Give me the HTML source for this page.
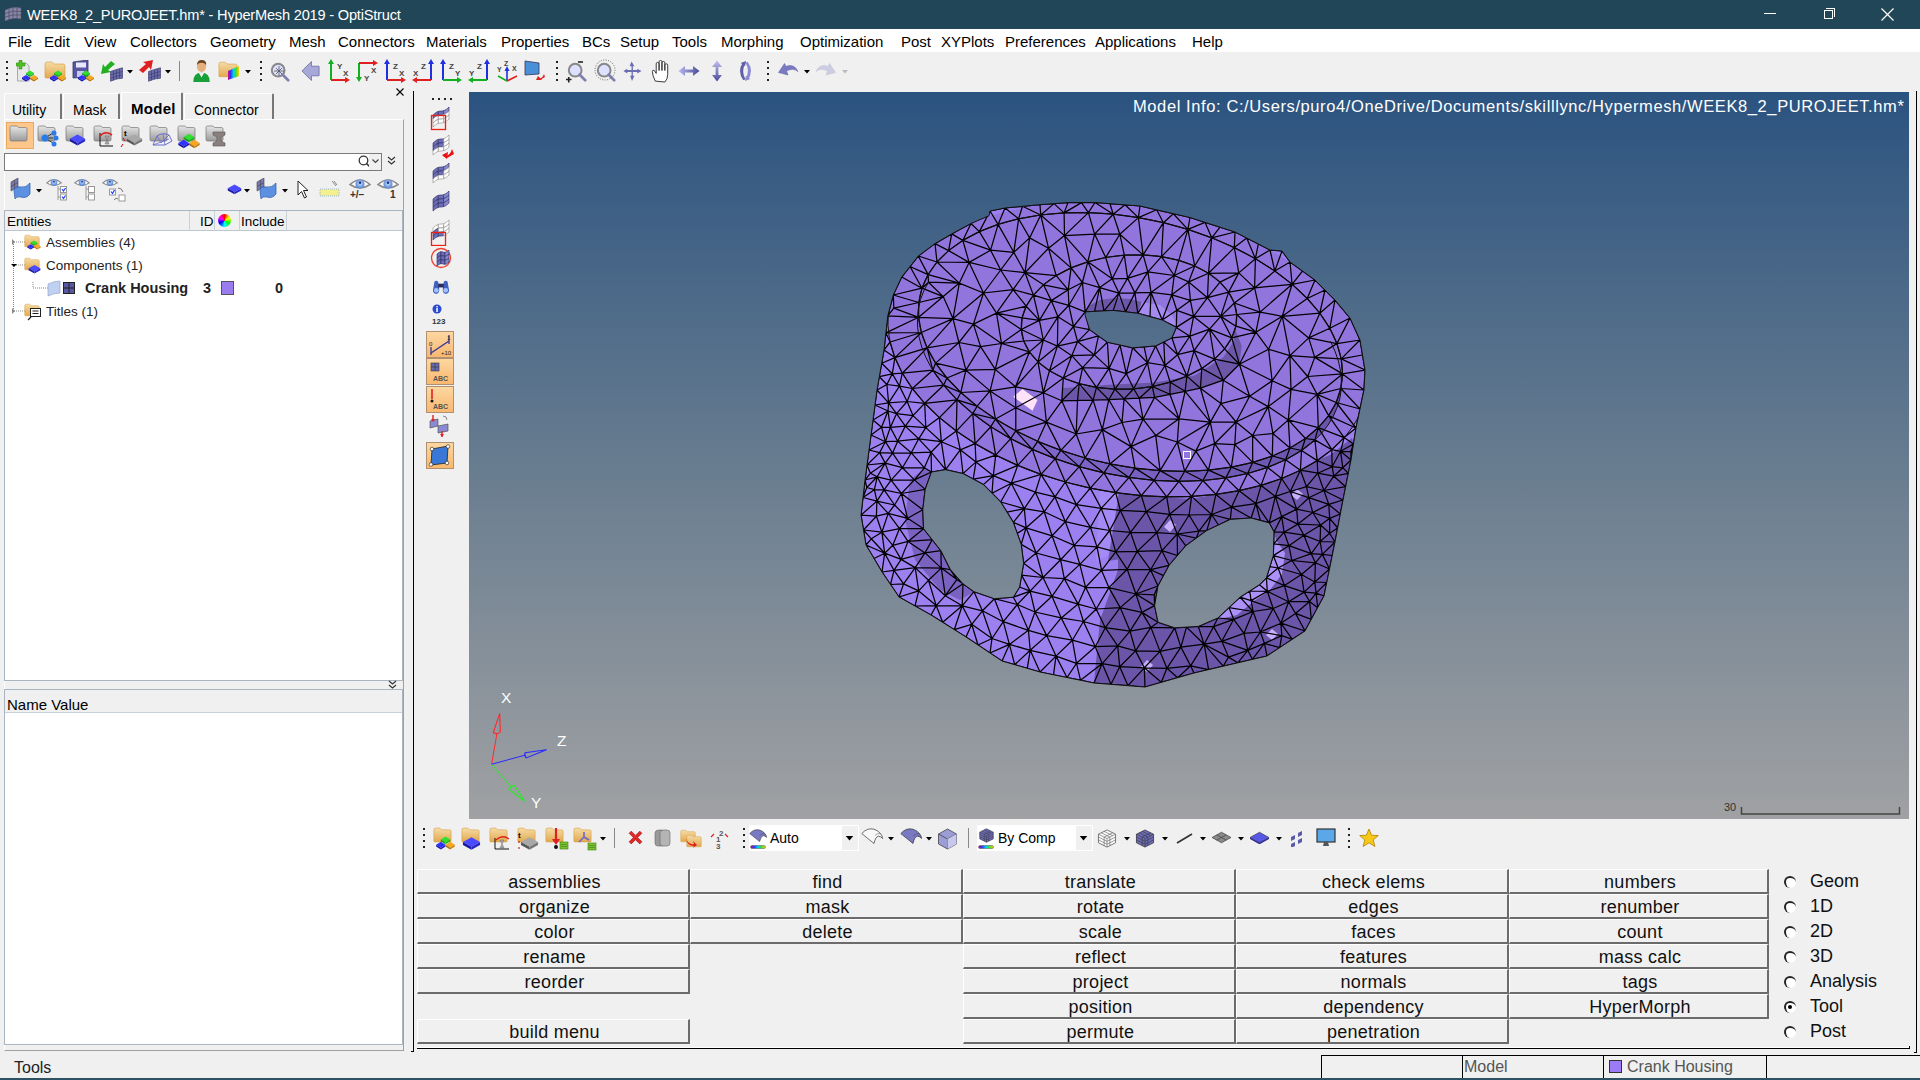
<!DOCTYPE html>
<html><head><meta charset="utf-8"><title>HyperMesh</title>
<style>*{box-sizing:border-box;margin:0;padding:0}
html,body{width:1920px;height:1080px;overflow:hidden;background:#f0f0f0;font-family:"Liberation Sans",sans-serif;color:#000}
.a{position:absolute}
.t{position:absolute;white-space:nowrap;line-height:1}
#title{left:0;top:0;width:1920px;height:29px;background:#214658}
#menu{left:0;top:29px;width:1920px;height:23px;background:#fff}
#menu .t{font-size:15px;top:5px;color:#000}
.btn{position:absolute;height:25px;background:#f0f0f0;border-top:1px solid #fff;border-left:1px solid #fff;border-bottom:2px solid #6b6b6b;border-right:2px solid #6b6b6b;font-size:18px;text-align:center;line-height:24px;padding-left:3px;letter-spacing:.25px;color:#111}
.rad{position:absolute;width:12px;height:12px;border-radius:50%;background:#fff;border-left:2px solid #222;border-top:2px solid #222;}
.rt{position:absolute;font-size:18px;line-height:1;white-space:nowrap;color:#111}
</style></head>
<body>
<!-- title bar -->
<div id="title" class="a">
  <svg class="a" style="left:4px;top:5px" width="18" height="18" viewBox="0 0 18 18"><path d="M1 5 Q9 1 17 3 L17 14 Q9 12 1 16 Z" fill="#8585b0" stroke="#555" stroke-width=".5"/><path d="M5 4v11M9 3v10M13 3v10M1 8.5Q9 5 17 6.5M1 12Q9 9 17 10" stroke="#444" stroke-width=".6" fill="none"/></svg>
  <div class="t" style="left:27px;top:8px;font-size:14.6px;letter-spacing:-0.2px;color:#fff">WEEK8_2_PUROJEET.hm* - HyperMesh 2019 - OptiStruct</div>
  <div class="a" style="left:1764px;top:13px;width:12px;height:1px;background:#fff"></div>
  <div class="a" style="left:1824px;top:10px;width:9px;height:9px;border:1px solid #fff"></div>
  <div class="a" style="left:1826px;top:8px;width:9px;height:9px;border-top:1px solid #fff;border-right:1px solid #fff"></div>
  <svg class="a" style="left:1881px;top:8px" width="13" height="13"><path d="M0.5 .5L12.5 12.5M12.5 .5L.5 12.5" stroke="#fff" stroke-width="1.2"/></svg>
</div>
<!-- menu -->
<div id="menu" class="a">
  <div class="t" style="left:8px">File</div>
  <div class="t" style="left:44px">Edit</div>
  <div class="t" style="left:84px">View</div>
  <div class="t" style="left:130px">Collectors</div>
  <div class="t" style="left:210px">Geometry</div>
  <div class="t" style="left:289px">Mesh</div>
  <div class="t" style="left:338px">Connectors</div>
  <div class="t" style="left:426px">Materials</div>
  <div class="t" style="left:501px">Properties</div>
  <div class="t" style="left:582px">BCs</div>
  <div class="t" style="left:620px">Setup</div>
  <div class="t" style="left:672px">Tools</div>
  <div class="t" style="left:721px">Morphing</div>
  <div class="t" style="left:800px">Optimization</div>
  <div class="t" style="left:901px">Post</div>
  <div class="t" style="left:941px">XYPlots</div>
  <div class="t" style="left:1005px">Preferences</div>
  <div class="t" style="left:1095px">Applications</div>
  <div class="t" style="left:1192px">Help</div>
</div>

<!-- viewport -->
<div class="a" style="left:469px;top:92px;width:1440px;height:727px;background:linear-gradient(#2b5380 0%,#667b8f 50%,#a0a1a3 100%)"></div>
<div class="t" style="left:1133px;top:98px;font-size:16.5px;letter-spacing:0.6px;color:#fff">Model Info: C:/Users/puro4/OneDrive/Documents/skilllync/Hypermesh/WEEK8_2_PUROJEET.hm*</div>

<!-- black separators -->
<div class="a" style="left:413px;top:91px;width:1px;height:961px;background:#000"></div>
<div class="a" style="left:1916px;top:91px;width:1px;height:962px;background:#000"></div>

<!-- left panel -->
<div class="a" style="left:4px;top:119px;width:400px;height:932px;border:1px solid #a0a0a0;border-top-color:#fff;border-left-color:#fff"></div>
<div class="a" style="left:4px;top:153px;width:378px;height:18px;background:#fff;border:1px solid #7a7a7a"></div>
<div class="a" style="left:4px;top:210px;width:399px;height:471px;background:#fff;border:1px solid #a9b6c2"></div>
<div class="a" style="left:5px;top:211px;width:397px;height:20px;background:#f0f0f0;border-bottom:1px solid #bcc7d0"></div>
<div class="t" style="left:7px;top:215px;font-size:13.5px;color:#000">Entities</div>
<div class="t" style="left:200px;top:215px;font-size:13.5px">ID</div>
<div class="t" style="left:241px;top:215px;font-size:13.5px">Include</div>
<div class="t" style="left:46px;top:236px;font-size:13.5px;color:#222">Assemblies (4)</div>
<div class="t" style="left:46px;top:259px;font-size:13.5px;color:#222">Components (1)</div>
<div class="t" style="left:85px;top:281px;font-size:14.5px;font-weight:bold;color:#222">Crank Housing</div>
<div class="t" style="left:203px;top:281px;font-size:14.5px;font-weight:bold;color:#222">3</div>
<div class="a" style="left:221px;top:281px;width:13px;height:14px;background:#9b7cf0;border:1px solid #555"></div>
<div class="t" style="left:275px;top:281px;font-size:14.5px;font-weight:bold;color:#222">0</div>
<div class="t" style="left:46px;top:305px;font-size:13.5px;color:#222">Titles (1)</div>

<div class="a" style="left:4px;top:689px;width:399px;height:356px;background:#fff;border:1px solid #a9b6c2"></div>
<div class="a" style="left:5px;top:690px;width:397px;height:23px;background:#f0f0f0;border-bottom:1px solid #c8d0d8"></div>
<div class="t" style="left:7px;top:697px;font-size:15px">Name Value</div>

<div class="t" style="left:14px;top:1060px;font-size:16px;color:#222">Tools</div>

<!-- button grid -->
<div class="btn" style="left:417px;top:869px;width:273px">assemblies</div>
<div class="btn" style="left:417px;top:894px;width:273px">organize</div>
<div class="btn" style="left:417px;top:919px;width:273px">color</div>
<div class="btn" style="left:417px;top:944px;width:273px">rename</div>
<div class="btn" style="left:417px;top:969px;width:273px">reorder</div>
<div class="btn" style="left:417px;top:1019px;width:273px">build menu</div>
<div class="btn" style="left:690px;top:869px;width:273px">find</div>
<div class="btn" style="left:690px;top:894px;width:273px">mask</div>
<div class="btn" style="left:690px;top:919px;width:273px">delete</div>
<div class="btn" style="left:963px;top:869px;width:273px">translate</div>
<div class="btn" style="left:963px;top:894px;width:273px">rotate</div>
<div class="btn" style="left:963px;top:919px;width:273px">scale</div>
<div class="btn" style="left:963px;top:944px;width:273px">reflect</div>
<div class="btn" style="left:963px;top:969px;width:273px">project</div>
<div class="btn" style="left:963px;top:994px;width:273px">position</div>
<div class="btn" style="left:963px;top:1019px;width:273px">permute</div>
<div class="btn" style="left:1236px;top:869px;width:273px">check elems</div>
<div class="btn" style="left:1236px;top:894px;width:273px">edges</div>
<div class="btn" style="left:1236px;top:919px;width:273px">faces</div>
<div class="btn" style="left:1236px;top:944px;width:273px">features</div>
<div class="btn" style="left:1236px;top:969px;width:273px">normals</div>
<div class="btn" style="left:1236px;top:994px;width:273px">dependency</div>
<div class="btn" style="left:1236px;top:1019px;width:273px">penetration</div>
<div class="btn" style="left:1509px;top:869px;width:260px">numbers</div>
<div class="btn" style="left:1509px;top:894px;width:260px">renumber</div>
<div class="btn" style="left:1509px;top:919px;width:260px">count</div>
<div class="btn" style="left:1509px;top:944px;width:260px">mass calc</div>
<div class="btn" style="left:1509px;top:969px;width:260px">tags</div>
<div class="btn" style="left:1509px;top:994px;width:260px">HyperMorph</div>
<div class="rad" style="left:1784px;top:876px"></div>
<div class="rt" style="left:1810px;top:872px">Geom</div>
<div class="rad" style="left:1784px;top:901px"></div>
<div class="rt" style="left:1810px;top:897px">1D</div>
<div class="rad" style="left:1784px;top:926px"></div>
<div class="rt" style="left:1810px;top:922px">2D</div>
<div class="rad" style="left:1784px;top:951px"></div>
<div class="rt" style="left:1810px;top:947px">3D</div>
<div class="rad" style="left:1784px;top:976px"></div>
<div class="rt" style="left:1810px;top:972px">Analysis</div>
<div class="rad" style="left:1784px;top:1001px"></div>
<div class="a" style="left:1788px;top:1005px;width:4px;height:4px;border-radius:50%;background:#000"></div>
<div class="rt" style="left:1810px;top:997px">Tool</div>
<div class="rad" style="left:1784px;top:1026px"></div>
<div class="rt" style="left:1810px;top:1022px">Post</div>
<!-- bottom frame lines -->
<div class="a" style="left:417px;top:1047px;width:1493px;height:1px;background:#fff"></div>
<div class="a" style="left:417px;top:1048px;width:1493px;height:1px;background:#000"></div>
<div class="a" style="left:1909px;top:1046px;width:1px;height:3px;background:#000"></div>
<div class="a" style="left:411px;top:1051px;width:3px;height:1px;background:#000"></div>
<div class="a" style="left:1914px;top:1052px;width:3px;height:1px;background:#000"></div>
<!-- status bar -->
<div class="a" style="left:1321px;top:1055px;width:141px;height:23px;border-left:1px solid #000;border-top:1px solid #000"></div>
<div class="a" style="left:1462px;top:1055px;width:141px;height:23px;border-left:1px solid #000;border-top:1px solid #000"></div>
<div class="t" style="left:1464px;top:1059px;font-size:16px;color:#555">Model</div>
<div class="a" style="left:1603px;top:1055px;width:163px;height:23px;border-left:1px solid #000;border-top:1px solid #000"></div>
<div class="a" style="left:1609px;top:1060px;width:13px;height:13px;background:#9b7cf6;border:1px solid #333"></div>
<div class="t" style="left:1627px;top:1059px;font-size:16px;color:#555">Crank Housing</div>
<div class="a" style="left:1766px;top:1055px;width:154px;height:23px;border-left:1px solid #000;border-top:1px solid #000"></div>
<div class="a" style="left:0;top:1078px;width:1920px;height:2px;background:#2d5264"></div>

<svg class="a" style="left:0;top:0" width="1920" height="1080" viewBox="0 0 1920 1080">
<defs><clipPath id="cp"><path d="M990.0 211.0 L1005.0 208.0 L1040.0 204.7 L1068.0 202.6 L1095.0 202.5 L1140.0 206.0 L1190.0 217.5 L1235.0 232.0 L1270.0 250.0 L1282.0 251.0 L1290.0 262.0 L1315.0 280.0 L1335.0 300.0 L1350.0 318.0 L1360.0 340.0 L1365.0 370.0 L1364.0 390.0 L1356.0 428.0 L1351.0 460.0 L1343.0 500.0 L1335.0 542.0 L1324.0 596.0 L1305.0 631.0 L1267.0 656.0 L1194.0 673.0 L1145.0 687.0 L1094.0 683.0 L1040.0 672.0 L1002.0 661.0 L966.0 637.0 L931.0 615.0 L899.0 597.0 L882.0 572.0 L866.0 545.0 L861.0 515.0 L865.0 480.0 L871.0 435.0 L877.0 390.0 L884.0 350.0 L887.8 315.8 L893.3 295.0 L901.7 277.0 L918.3 256.0 L935.0 243.6 L951.7 233.9 L971.0 223.5 L989.0 215.8ZM931.5 472.0 L945.6 469.7 L963.0 473.6 L983.4 484.6 L1000.7 502.0 L1013.3 522.4 L1021.2 544.4 L1023.6 563.3 L1019.6 587.0 L1013.3 597.2 L994.4 598.7 L974.0 591.7 L963.0 583.8 L950.4 569.6 L940.9 550.7 L923.6 528.7 L922.8 509.8 L925.2 489.4ZM1230.3 519.4 L1251.1 518.0 L1269.2 522.9 L1274.0 532.0 L1273.3 555.6 L1266.4 577.8 L1259.4 584.7 L1240.0 597.2 L1217.8 618.0 L1198.3 626.4 L1174.7 627.8 L1158.0 622.2 L1154.6 605.6 L1158.0 586.0 L1169.2 565.3 L1185.8 545.8 L1206.7 530.6ZM1085.2 311.9 L1113.3 310.4 L1137.8 313.3 L1162.2 320.0 L1176.3 327.4 L1171.9 337.8 L1155.6 345.9 L1132.6 347.8 L1107.4 342.2 L1089.6 329.6 L1085.2 315.6Z" clip-rule="evenodd"/></clipPath></defs>
<g clip-path="url(#cp)">
<path d="M990.0 211.0 L1005.0 208.0 L1040.0 204.7 L1068.0 202.6 L1095.0 202.5 L1140.0 206.0 L1190.0 217.5 L1235.0 232.0 L1270.0 250.0 L1282.0 251.0 L1290.0 262.0 L1315.0 280.0 L1335.0 300.0 L1350.0 318.0 L1360.0 340.0 L1365.0 370.0 L1364.0 390.0 L1356.0 428.0 L1351.0 460.0 L1343.0 500.0 L1335.0 542.0 L1324.0 596.0 L1305.0 631.0 L1267.0 656.0 L1194.0 673.0 L1145.0 687.0 L1094.0 683.0 L1040.0 672.0 L1002.0 661.0 L966.0 637.0 L931.0 615.0 L899.0 597.0 L882.0 572.0 L866.0 545.0 L861.0 515.0 L865.0 480.0 L871.0 435.0 L877.0 390.0 L884.0 350.0 L887.8 315.8 L893.3 295.0 L901.7 277.0 L918.3 256.0 L935.0 243.6 L951.7 233.9 L971.0 223.5 L989.0 215.8Z" fill="#9c80f0"/>
<linearGradient id="gw" x1="900" y1="0" x2="1370" y2="0" gradientUnits="userSpaceOnUse"><stop offset="0" stop-color="#8c70dc"/><stop offset=".45" stop-color="#7a62c4"/><stop offset="1" stop-color="#6652a6"/></linearGradient>
<path d="M1118.0 494.0 L1190.0 499.0 L1247.0 489.0 L1330.0 455.0 L1352.0 438.0 L1354.0 447.0 L1343.0 500.0 L1335.0 542.0 L1324.0 596.0 L1305.0 631.0 L1267.0 656.0 L1194.0 673.0 L1145.0 687.0 L1094.0 683.0 L1100.0 620.0 L1118.0 570.0Z" fill="#6a55a8"/>
<path d="M1100.0 485.0 L1121.0 481.0 L1108.0 556.0 L1096.0 561.0Z" fill="#a48af4"/>
<path d="M1121.0 481.0 L1147.0 511.0 L1141.0 556.0 L1108.0 561.0Z" fill="#6a55a8"/>
<path d="M1366.7 392.5 L1363.5 405.0 L1358.4 416.9 L1351.5 428.4 L1342.7 439.2 L1332.2 449.3 L1320.1 458.6 L1306.4 467.0 L1291.3 474.5 L1274.9 481.0 L1257.3 486.4 L1238.6 490.8 L1219.1 494.0 L1198.8 496.0 L1178.0 496.8 L1156.7 496.5 L1135.2 495.0 L1113.7 492.4 L1092.3 488.5 L1071.1 483.6 L1050.5 477.6 L1030.4 470.6 L1011.1 462.6 L992.8 453.6 L975.6 443.9 L959.6 433.4 L944.9 422.2 L931.7 410.5 L920.1 398.2 L910.2 385.6 L902.0 372.7 L895.7 359.6 L891.2 346.4 L888.6 333.3 L888.0 320.2 L889.3 307.5 L892.5 295.0 L897.6 283.1 L904.5 271.6 L913.3 260.8 L923.8 250.7 L935.9 241.4 L949.6 233.0 L964.7 225.5 L981.1 219.0 L998.7 213.6 L1017.4 209.2 L1036.9 206.0 L1057.2 204.0 L1078.0 203.2 L1099.3 203.5 L1120.8 205.0 L1142.3 207.6 L1163.7 211.5 L1184.9 216.4 L1205.5 222.4 L1225.6 229.4 L1244.9 237.4 L1263.2 246.4 L1280.4 256.1 L1296.4 266.6 L1311.1 277.8 L1324.3 289.5 L1335.9 301.8 L1345.8 314.4 L1354.0 327.3 L1360.3 340.4 L1364.8 353.6 L1367.4 366.7 L1368.0 379.8 L1366.7 392.5Z" fill="#9175dd"/>
<path d="M1331.5 331.4 L1337.0 343.7 L1340.6 355.9 L1342.3 368.0 L1342.2 379.9 L1340.1 391.4 L1336.1 402.5 L1330.3 413.1 L1322.8 423.0 L1313.4 432.1 L1302.5 440.5 L1290.0 448.0 L1276.0 454.5 L1260.8 460.0 L1244.4 464.5 L1226.9 467.9 L1208.6 470.1 L1189.6 471.2 L1170.1 471.1 L1150.2 469.8 L1130.1 467.4 L1110.0 463.9 L1090.1 459.3 L1070.6 453.6 L1051.6 447.0 L1033.3 439.4 L1015.9 430.9 L999.5 421.6 L984.3 411.6 L970.4 400.9 L958.0 389.8 L947.1 378.2 L937.8 366.3 L930.2 354.1 L924.5 341.9 L920.6 329.6 L918.6 317.5 L918.5 305.6 L920.3 294.0 L924.0 282.8 L929.5 272.2 L928.5 282.2 L923.0 292.8 L919.3 304.0 L917.5 315.6 L917.6 327.5 L919.6 339.6 L923.5 351.9 L929.2 364.1 L936.8 376.3 L946.1 388.2 L957.0 399.8 L969.4 410.9 L983.3 421.6 L998.5 431.6 L1014.9 440.9 L1032.3 449.4 L1050.6 457.0 L1069.6 463.6 L1089.1 469.3 L1109.0 473.9 L1129.1 477.4 L1149.2 479.8 L1169.1 481.1 L1188.6 481.2 L1207.6 480.1 L1225.9 477.9 L1243.4 474.5 L1259.8 470.0 L1275.0 464.5 L1289.0 458.0 L1301.5 450.5 L1312.4 442.1 L1321.8 433.0 L1329.3 423.1 L1335.1 412.5 L1339.1 401.4 L1341.2 389.9 L1341.3 378.0 L1339.6 365.9 L1336.0 353.7 L1330.5 341.4Z" fill="url(#gw)"/>
<path d="M1340.8 388.5 L1336.8 400.9 L1330.6 412.6 L1322.2 423.5 L1311.7 433.6 L1299.2 442.6 L1284.9 450.6 L1268.9 457.3 L1251.3 462.8 L1232.4 466.9 L1212.4 469.7 L1191.5 471.1 L1170.0 471.1 L1148.0 469.6 L1125.8 466.8 L1103.6 462.6 L1081.8 457.0 L1060.5 450.2 L1039.9 442.3 L1020.4 433.2 L1002.0 423.1 L985.1 412.1 L969.7 400.4 L956.1 388.0 L944.5 375.1 L934.8 361.8 L927.3 348.4 L922.0 334.8 L919.0 321.4 L918.4 308.1 L920.0 295.3 L924.0 282.9 L930.2 271.2 L938.6 260.3 L949.1 250.2 L961.6 241.2 L975.9 233.2 L991.9 226.5 L1009.5 221.0 L1028.4 216.9 L1048.4 214.1 L1069.3 212.7 L1090.8 212.7 L1112.8 214.2 L1135.0 217.0 L1157.2 221.2 L1179.0 226.8 L1200.3 233.6 L1220.9 241.5 L1240.4 250.6 L1258.8 260.7 L1275.7 271.7 L1291.1 283.4 L1304.7 295.8 L1316.3 308.7 L1326.0 322.0 L1333.5 335.4 L1338.8 349.0 L1341.8 362.4 L1342.4 375.7 L1340.8 388.5Z" fill="#9175dd"/>
<path d="M931.5 472.0 L925.2 489.4 L922.8 509.8 L923.6 528.7 L940.9 550.7 L950.4 569.6 L963.0 583.8 L974.0 591.7 L960.0 600.0 L940.0 590.0 L915.0 560.0 L905.0 520.0 L910.0 480.0 L925.0 468.0Z" fill="#7a62c0"/>
<path d="M1274.0 532.0 L1273.3 555.6 L1266.4 577.8 L1259.4 584.7 L1240.0 597.2 L1217.8 618.0 L1220.0 619.0 L1237.0 615.0 L1254.0 601.0 L1270.0 590.0 L1282.0 574.0 L1285.0 553.0 L1276.0 540.0Z" fill="#ac92f8"/>
<path d="M1236.7 314.5 L1236.5 322.9 L1234.5 331.3 L1230.9 339.6 L1225.7 347.6 L1218.9 355.2 L1210.7 362.3 L1201.3 368.7 L1190.7 374.4 L1179.1 379.3 L1166.7 383.2 L1153.8 386.2 L1140.4 388.2 L1126.9 389.2 L1113.4 389.1 L1100.2 387.9 L1087.4 385.7 L1075.2 382.5 L1063.9 378.3 L1053.7 373.2 L1044.6 367.4 L1036.8 360.8 L1030.5 353.6 L1025.8 345.9 L1022.7 337.9 L1021.3 329.5 L1021.5 321.1 L1023.5 312.7 L1027.1 304.4 L1032.3 296.4 L1039.1 288.8 L1047.3 281.7 L1056.7 275.3 L1067.3 269.6 L1078.9 264.7 L1091.3 260.8 L1104.2 257.8 L1117.6 255.8 L1131.1 254.8 L1144.6 254.9 L1157.8 256.1 L1170.6 258.3 L1182.8 261.5 L1194.1 265.7 L1204.3 270.8 L1213.4 276.6 L1221.2 283.2 L1227.5 290.4 L1232.2 298.1 L1235.3 306.1 L1236.7 314.5Z" fill="#9175dd"/>
<path d="M1061.8 388.2 L1108.8 384.8 L1154.6 382.5 L1194.7 375.6 L1223.3 357.3 L1233.6 341.3 L1234.8 328.6 L1241.7 345.8 L1239.4 364.2 L1223.3 380.2 L1200.4 388.2 L1154.6 397.4 L1108.8 399.7 L1061.8 400.8Z" fill="#6c56a8"/>
<path d="M1085.0 312.0 L1090.0 305.0 L1100.0 300.0 L1115.0 298.0 L1130.0 299.0 L1142.0 302.0 L1138.0 313.0 L1113.0 310.4Z" fill="#6c56a8"/>
<path d="M1142.0 302.0 L1160.0 305.0 L1172.0 315.0 L1178.0 327.0 L1162.0 320.0 L1138.0 313.0Z" fill="#a58af0"/>
<path d="M1013.3 396.7L1022.5 389L1037.5 400L1032.5 410.8Z" fill="#fde2fa"/>
<path d="M1164 527L1170 520L1176 525L1170 532Z" fill="#c8b0ff"/>
<path d="M1291 495L1297 489L1303 494L1297 500Z" fill="#c8b0ff"/>
<path d="M1266 635L1272 629L1278 634L1272 640Z" fill="#c8b0ff"/>
<path d="M1141 667L1147 660L1153 665L1147 672Z" fill="#c8b0ff"/>
<path d="M1021.3 329.5L996.5 313.1M932.2 539.7L908.0 541.4M1210.3 422.1L1195.8 451.1M1018.6 218.8L1029.6 237.9M1332.2 555.5L1322.3 554.4M1110.0 203.7L1125.0 204.8M1335.0 542.0L1332.2 555.5M923.6 528.7L899.5 528.6M899.5 386.1L892.3 373.8M1178.8 260.4L1187.9 229.4M1332.2 555.5L1329.5 569.0M918.8 302.5L943.2 296.6M942.7 622.3L931.0 615.0M1324.0 596.0L1305.0 631.0M1063.3 378.0L1061.8 400.8M1043.3 340.0L1057.4 346.1M1097.0 546.9L1074.2 545.4M915.2 567.6L894.0 570.4M931.0 615.0L915.0 606.0M912.3 388.5L907.1 401.5M918.3 256.0L937.0 262.0M973.2 479.1L983.4 484.6M901.1 559.4L884.7 553.2M1064.3 578.7L1043.0 577.5M1194.7 266.0L1187.9 229.4M1228.6 292.1L1254.6 287.9M902.3 373.2L899.5 386.1M983.4 484.6L992.0 493.3M1152.3 386.5L1154.6 397.4M1348.3 473.3L1333.8 476.2M1061.2 617.9L1035.0 612.0M1198.3 626.4L1186.5 627.1M1000.7 270.0L1025.0 272.7M1200.4 388.2L1210.3 422.1M1268.2 406.6L1272.9 433.5M942.7 622.3L936.2 605.6M1035.0 612.0L1017.3 604.5M915.2 567.6L901.1 559.4M983.5 293.0L996.5 313.1M1231.8 337.8L1224.6 348.9M892.6 453.1L885.2 463.1M901.1 559.4L892.8 545.3M1026.2 306.2L996.5 313.1M931.5 472.0L924.4 467.8M928.1 274.6L959.3 283.1M1061.8 400.8L1077.5 400.4M1208.5 273.3L1238.8 272.9M960.8 392.5L946.9 378.0M946.9 378.0L935.6 363.1M995.5 419.0L990.1 390.9M1101.2 508.4L1090.4 527.3M1317.2 460.6L1332.1 466.7M1273.2 608.5L1280.9 623.2M1331.8 449.7L1317.2 460.6M1305.0 631.0L1295.5 613.4M1300.4 470.2L1317.8 473.2M1072.4 640.2L1076.5 663.3M1129.1 477.4L1104.0 472.9M1150.9 627.4L1160.0 651.4M885.9 332.9L918.6 317.3M983.5 293.0L1000.7 270.0M1021.2 544.4L1023.6 563.3M941.3 441.7L925.8 427.6M1228.9 607.6L1233.7 619.3M915.0 606.0L936.2 605.6M1208.5 470.1L1214.6 443.7M1021.2 544.4L1026.1 527.8M1252.7 462.4L1234.8 444.6M1163.6 575.6L1169.2 565.3M1043.3 340.0L1057.9 316.8M1292.1 284.3L1282.3 316.3M1236.7 314.5L1255.9 332.2M1139.3 398.2L1143.0 419.2M1152.3 386.5L1133.7 388.8M1135.0 468.1L1131.0 446.6M1133.7 388.8L1114.9 389.1M1215.9 494.4L1202.9 480.5M1297.9 524.1L1320.6 525.0M1094.0 683.0L1102.2 663.6M983.5 293.0L973.4 324.1M1154.6 397.4L1169.9 394.3M1060.6 559.7L1043.0 577.5M1281.7 516.6L1284.1 532.2M1177.3 442.0L1210.3 422.1M935.6 363.1L965.9 370.2M994.4 598.7L1003.3 621.7M1163.6 575.6L1150.5 569.7M946.9 378.0L932.8 370.2M922.0 288.2L928.1 274.6M1030.1 591.1L1035.0 612.0M1272.1 380.8L1268.2 406.6M1036.2 553.0L1043.0 577.5M1215.9 494.4L1191.6 496.4M980.6 346.6L973.4 324.1M1169.2 565.3L1150.5 569.7M867.0 465.0L879.6 452.6M990.8 426.7L972.8 413.6M875.0 405.0L888.0 411.0M1140.0 206.0L1156.7 209.8M1103.9 310.9L1099.7 287.6M1147.9 271.8L1151.0 292.4M972.8 413.6L957.0 399.8M1073.5 326.5L1057.9 316.8M924.7 403.3L925.8 427.6M1208.5 273.3L1234.3 247.6M1326.8 582.5L1324.0 596.0M1160.0 651.4L1144.3 667.8M928.5 580.3L936.2 605.6M1052.1 535.8L1026.1 527.8M951.7 233.9L962.8 240.4M899.0 597.0L890.5 584.5M1251.1 518.0L1260.4 520.3M1351.0 460.0L1350.9 451.7M1171.8 294.8L1151.0 292.4M891.1 480.1L885.2 463.1M1336.9 343.6L1314.7 357.4M1160.0 651.4L1135.6 650.9M1048.5 248.2L1025.0 272.7M1177.2 534.0L1161.9 550.7M1177.7 677.7L1190.6 665.8M1342.5 373.9L1317.1 394.4M956.8 579.6L941.3 568.1M1290.0 448.0L1301.5 450.5M1107.4 342.2L1094.4 354.9M1272.3 456.0L1285.6 459.7M881.9 532.2L876.4 516.2M861.0 515.0L876.4 516.2M1340.6 451.3L1342.8 467.8M1156.8 532.7L1161.9 550.7M1146.3 511.7L1156.8 532.7M1268.6 349.3L1289.9 355.6M925.8 427.6L905.3 426.1M1163.8 341.9L1177.6 354.7M863.0 497.5L866.8 487.5M1120.4 510.4L1130.5 532.3M1120.2 607.6L1105.3 627.7M913.0 415.6L896.5 413.7M979.4 231.6L990.6 250.2M1266.4 577.8L1284.5 585.6M1235.0 232.0L1246.7 238.0M1198.3 626.4L1204.1 644.2M1279.7 647.7L1267.0 656.0M1186.5 627.1L1180.9 647.1M1233.7 619.3L1244.0 633.3M998.1 224.4L990.6 250.2M1206.7 530.6L1211.6 514.5M1184.7 471.3L1177.3 442.0M1267.0 656.0L1252.4 659.4M1213.6 626.6L1221.8 641.3M861.0 515.0L863.0 497.5M1028.4 630.3L1030.2 650.3M1105.3 627.7L1117.7 645.8M973.4 324.1L1001.5 343.5M1143.1 254.9L1163.4 222.7M1071.1 267.9L1068.2 289.8M863.0 497.5L865.0 480.0M1003.3 621.7L1009.4 644.4M1021.6 575.1L1019.6 587.0M1114.9 389.1L1108.8 399.7M1108.8 399.7L1102.3 429.6M1105.7 257.5L1119.8 234.2M963.0 473.6L976.0 461.9M1019.6 587.0L1013.3 597.2M1249.6 396.2L1272.1 380.8M882.0 572.0L894.0 570.4M978.0 645.0L971.7 624.3M1120.0 345.0L1107.4 342.2M995.3 369.4L990.1 390.9M1185.8 545.8L1196.2 538.2M925.2 489.4L914.4 479.9M1161.5 256.6L1178.8 260.4M1296.7 509.1L1312.7 512.5M1096.5 387.4L1079.2 383.6M1024.3 508.6L1026.1 527.8M1166.7 496.8L1154.2 480.3M1190.6 665.8L1166.9 668.3M963.0 583.8L945.3 595.7M931.1 452.2L924.4 467.8M1185.1 391.3L1200.4 388.2M914.4 479.9L891.1 480.1M1291.9 560.5L1315.4 562.8M1154.6 605.6L1141.9 612.4M1057.4 346.1L1057.9 316.8M1282.3 316.3L1260.0 312.1M902.4 467.7L885.2 463.1M937.0 262.0L948.6 250.6M1022.1 317.8L996.5 313.1M1040.7 215.0L1029.6 237.9M1166.7 496.8L1141.3 495.6M1356.0 428.0L1328.6 415.6M1324.0 596.0L1311.3 619.3M957.0 399.8L943.6 385.2M1049.5 370.7L1043.3 392.7M918.3 256.0L928.1 274.6M1282.3 316.3L1289.9 355.6M901.1 559.4L894.0 570.4M935.0 243.6L937.0 262.0M1331.8 449.7L1332.1 466.7M896.5 413.7L888.6 402.8M1117.7 645.8L1102.2 663.6M1333.8 476.2L1323.9 490.5M1345.7 486.7L1333.8 476.2M911.3 452.8L897.7 441.2M1315.0 280.0L1292.1 284.3M945.6 469.7L941.3 441.7M1304.1 592.1L1288.6 601.7M931.0 615.0L936.2 605.6M1027.3 668.3L1030.2 650.3M1117.7 645.8L1095.3 646.7M1130.5 532.3L1115.7 551.8M1109.7 530.5L1097.0 546.9M903.6 583.9L894.0 570.4M1328.8 504.4L1329.7 518.3M1214.6 443.7L1210.3 422.1M942.7 622.3L962.2 605.8M1231.3 467.1L1247.6 473.5M1317.8 473.2L1323.9 490.5M1220.0 282.1L1238.8 272.9M1101.2 508.4L1109.7 530.5M1064.1 212.9L1088.4 212.6M1306.5 486.7L1308.8 497.7M977.1 406.2L990.1 390.9M1076.4 504.6L1090.4 527.3M1078.1 604.1L1061.2 617.9M1120.0 345.0L1109.0 368.4M995.7 455.1L975.1 443.6M922.8 509.8L901.4 493.5M1158.0 586.0L1150.5 569.7M1089.6 329.6L1077.6 341.6M1258.3 244.0L1270.0 250.0M1015.8 430.8L1046.4 422.1M1094.4 354.9L1071.8 355.7M1215.9 494.4L1231.6 507.1M982.4 610.8L971.7 624.3M1061.2 617.9L1046.7 635.6M887.8 315.8L918.6 317.3M1043.5 284.8L1025.0 272.7M962.2 605.8L936.2 605.6M956.3 431.1L941.3 441.7M893.3 295.0L918.8 302.5M931.5 472.0L945.6 469.7M867.0 465.0L869.0 450.0M1021.3 329.5L1001.5 343.5M1291.0 389.4L1288.3 419.9M992.0 493.3L1011.3 483.2M995.3 369.4L980.6 346.6M1249.7 591.0L1240.0 597.2M1307.2 298.5L1282.3 316.3M1215.9 494.4L1225.9 477.9M994.4 598.7L974.0 591.7M1130.0 631.1L1105.3 627.7M866.0 545.0L871.3 538.8M1098.5 335.9L1089.6 329.6M1099.7 287.6L1118.9 293.1M1156.7 209.8L1138.4 217.6M1191.6 496.4L1202.9 480.5M918.8 302.5L893.8 308.1M1206.7 530.6L1218.5 525.0M1080.5 680.2L1102.2 663.6M962.2 605.8L945.3 595.7M1208.6 669.6L1190.6 665.8M1194.7 266.0L1208.5 273.3M1273.3 555.6L1278.1 568.0M884.0 350.0L890.1 342.0M1151.0 292.4L1134.9 292.9M918.7 438.8L911.3 452.8M1288.3 419.9L1272.9 433.5M1097.0 546.9L1079.8 564.4M1318.3 427.6L1314.9 439.9M1230.3 519.4L1231.6 507.1M1060.9 450.4L1079.3 466.6M1144.3 667.8L1119.7 666.7M1037.7 441.3L1015.8 430.8M1272.1 380.8L1289.9 355.6M905.3 426.1L897.7 441.2M1147.5 362.7L1164.9 365.5M1305.4 438.5L1301.5 450.5M1064.3 578.7L1052.0 596.3M1127.6 278.3L1147.9 271.8M1189.1 515.0L1177.2 534.0M863.5 530.0L876.4 516.2M1174.2 275.5L1151.0 292.4M869.0 450.0L879.6 452.6M1335.0 300.0L1350.0 318.0M1007.0 512.2L1024.3 508.6M1307.7 376.5L1289.9 355.6M1225.9 477.9L1202.9 480.5M951.7 233.9L948.6 250.6M1300.4 470.2L1290.3 491.5M1011.3 483.2L993.3 475.7M881.9 532.2L871.3 538.8M980.6 346.6L1001.5 343.5M971.0 223.5L962.8 240.4M1269.2 522.9L1260.4 520.3M1236.7 314.5L1234.3 303.0M1353.5 444.0L1344.1 437.6M1335.0 300.0L1329.8 328.3M1341.2 358.9L1314.7 357.4M1252.6 435.5L1236.1 422.0M1201.8 368.4L1186.9 376.1M1300.4 470.2L1285.6 459.7M899.0 597.0L903.6 583.9M1279.7 647.7L1281.8 635.6M1021.6 575.1L1030.1 591.1M1098.5 335.9L1094.4 354.9M1185.1 391.3L1179.0 418.8M1281.6 478.5L1267.6 467.4M1093.1 400.1L1108.8 399.7M1267.0 656.0L1264.4 643.4M1026.2 306.2L1033.4 295.1M1184.7 471.3L1178.9 481.3M1323.9 490.5L1328.8 504.4M1308.7 337.9L1289.9 355.6M927.1 347.9L921.4 332.5M913.0 415.6L905.3 426.1M1127.6 278.3L1134.9 292.9M1065.3 521.7L1052.1 535.8M1055.0 496.9L1044.2 511.8M1193.6 316.4L1176.8 310.3M865.0 480.0L866.8 487.5M1177.3 442.0L1155.7 435.4M1290.0 448.0L1272.3 456.0M907.1 401.5L896.5 413.7M1300.4 470.2L1281.6 478.5M1035.4 492.2L1024.3 508.6M887.8 315.8L893.8 308.1M1275.3 496.4L1281.7 516.6M1186.5 627.1L1204.1 644.2M1281.6 478.5L1261.1 485.4M1079.3 466.6L1055.3 458.7M1081.5 202.6L1095.0 202.5M1274.8 271.0L1254.6 287.9M940.9 550.7L925.0 552.9M1055.3 458.7L1032.3 449.4M913.0 415.6L907.1 401.5M1218.5 525.0L1211.6 514.5M1337.7 528.0L1335.0 542.0M1160.1 470.6L1177.3 442.0M907.1 401.5L899.5 386.1M1161.5 256.6L1163.4 222.7M1160.1 470.6L1155.7 435.4M1273.7 543.8L1288.9 545.7M901.7 277.0L922.0 288.2M954.3 629.7L942.7 622.3M924.7 403.3L907.1 401.5M1208.5 470.1L1195.8 451.1M1115.7 551.8L1097.0 546.9M910.0 266.5L928.1 274.6M1176.3 327.4L1193.6 316.4M1085.6 587.3L1064.3 578.7M966.0 637.0L971.7 624.3M1067.0 677.5L1056.0 656.1M1290.0 262.0L1292.1 284.3M1166.7 496.8L1178.9 481.3M1083.4 621.5L1061.2 617.9M1179.0 418.8L1155.7 435.4M963.0 583.8L962.2 605.8M1141.3 495.6L1154.2 480.3M1053.5 674.8L1056.0 656.1M928.5 580.3L915.2 567.6M1289.9 355.6L1314.7 357.4M902.4 467.7L891.1 480.1M1015.8 430.8L1032.3 449.4M1138.4 217.6L1119.8 234.2M1173.3 213.7L1190.0 217.5M954.3 629.7L962.2 605.8M1317.7 607.7L1309.6 601.4M1239.4 364.2L1272.1 380.8M1190.0 217.5L1205.0 222.3M1317.7 607.7L1311.3 619.3M1060.9 450.4L1046.4 422.1M1311.3 619.3L1295.5 613.4M1038.0 361.9L1043.3 392.7M1331.8 449.7L1340.6 451.3M1188.7 281.9L1174.2 275.5M1311.3 619.3L1305.0 631.0M882.0 572.0L874.0 558.5M1082.4 282.5L1068.9 305.3M874.0 558.5L866.0 545.0M1261.1 485.4L1255.8 503.6M1214.6 443.7L1236.1 422.0M1029.4 351.9L995.3 369.4M1239.4 364.2L1249.6 396.2M1017.2 533.4L1021.2 544.4M1029.4 351.9L1001.5 343.5M925.0 552.9L908.0 541.4M1158.0 586.0L1163.6 575.6M1235.0 232.0L1211.7 237.8M1014.7 664.7L1030.2 650.3M995.7 455.1L1010.7 438.6M1128.0 685.7L1119.7 666.7M1085.1 458.0L1076.2 434.0M1246.7 238.0L1234.3 247.6M1125.0 204.8L1138.4 217.6M1170.2 382.2L1152.3 386.5M1109.7 530.5L1115.7 551.8M1261.1 485.4L1247.6 473.5M1269.2 522.9L1275.3 496.4M1124.1 398.9L1139.3 398.2M1312.7 512.5L1329.7 518.3M899.5 386.1L886.9 384.5M1061.8 400.8L1046.4 422.1M1306.5 486.7L1323.9 490.5M1139.3 398.2L1154.6 397.4M1079.8 564.4L1064.3 578.7M918.6 317.3L918.8 302.5M953.0 318.6L973.4 324.1M918.8 302.5L922.0 288.2M1052.0 596.3L1061.2 617.9M892.3 373.8L886.9 384.5M1261.1 485.4L1239.1 490.7M1240.0 597.2L1251.1 600.6M1239.1 490.7L1215.9 494.4M1032.3 449.4L1010.7 438.6M873.0 420.0L888.0 411.0M1061.2 617.9L1072.4 640.2M1010.7 438.6L990.8 426.7M1025.0 272.7L1029.6 237.9M1035.0 612.0L1046.7 635.6M1057.9 316.8L1051.3 300.6M1090.3 488.1L1101.2 508.4M1194.7 266.0L1211.7 237.8M902.3 373.2L892.3 373.8M1000.7 502.0L1011.3 483.2M1074.2 545.4L1052.1 535.8M866.0 545.0L884.7 553.2M1056.2 275.6L1048.5 248.2M1063.3 378.0L1049.5 370.7M863.5 530.0L871.3 538.8M1273.3 555.6L1291.9 560.5M1054.0 203.6L1040.7 215.0M1090.3 488.1L1079.3 466.6M1097.0 546.9L1101.6 570.4M1154.6 397.4L1179.0 418.8M1269.8 566.7L1278.1 568.0M1305.4 438.5L1314.9 439.9M1251.1 518.0L1231.6 507.1M1064.3 578.7L1078.1 604.1M1336.9 343.6L1308.7 337.9M885.4 441.7L879.6 452.6M979.4 231.6L998.1 224.4M892.8 545.3L881.9 532.2M863.5 530.0L881.9 532.2M1176.3 327.4L1189.9 336.2M1169.6 514.3L1177.2 534.0M881.7 363.3L892.3 373.8M941.3 441.7L918.7 438.8M1131.0 446.6L1122.0 422.5M1090.3 488.1L1065.3 482.0M1205.0 222.3L1220.0 227.2M1305.0 631.0L1280.9 623.2M1220.0 227.2L1235.0 232.0M1300.4 470.2L1306.5 486.7M1305.0 631.0L1292.3 639.3M861.0 515.0L876.9 501.1M1150.9 627.4L1135.6 650.9M1340.6 451.3L1332.1 466.7M1308.8 497.7L1296.7 509.1M1281.6 478.5L1290.3 491.5M1292.3 639.3L1279.7 647.7M866.0 545.0L863.5 530.0M1063.3 378.0L1082.6 367.6M1130.0 631.1L1117.7 645.8M1296.7 509.1L1281.7 516.6M890.3 427.4L888.0 411.0M863.5 530.0L861.0 515.0M1291.0 389.4L1268.2 406.6M1093.1 400.1L1102.3 429.6M1315.4 562.8L1301.4 574.5M1023.6 563.3L1021.6 575.1M899.0 597.0L918.7 590.9M1342.5 373.9L1314.7 357.4M1210.3 422.1L1236.1 422.0M1002.0 661.0L1009.4 644.4M1301.4 574.5L1284.5 585.6M899.5 528.6L888.2 513.4M1209.5 329.1L1189.9 336.2M1281.6 478.5L1285.6 459.7M1258.3 244.0L1255.4 258.7M1169.2 565.3L1177.5 555.5M890.5 584.5L903.6 583.9M990.0 653.0L992.0 638.5M1087.8 261.8L1064.5 235.6M1019.6 587.0L1030.1 591.1M1297.9 524.1L1303.9 535.2M888.2 513.4L876.9 501.1M1013.1 289.6L996.5 313.1M871.0 435.0L881.5 427.2M1184.7 471.3L1202.9 480.5M990.0 211.0L979.4 231.6M1099.7 287.6L1082.4 282.5M1065.3 521.7L1074.2 545.4M1320.1 541.5L1322.3 554.4M1284.1 532.2L1288.9 545.7M1160.1 470.6L1178.9 481.3M1247.8 650.3L1228.5 657.1M1132.6 347.8L1126.3 373.6M1147.9 271.8L1134.9 292.9M1114.9 389.1L1096.5 387.4M994.4 598.7L982.4 610.8M1044.2 511.8L1052.1 535.8M1035.4 492.2L1044.2 511.8M921.4 332.5L953.0 318.6M1275.3 496.4L1296.7 509.1M974.0 591.7L962.2 605.8M1340.8 388.5L1317.1 394.4M1169.9 394.3L1185.1 391.3M1071.8 355.7L1082.6 367.6M1318.3 427.6L1288.3 419.9M980.6 346.6L965.9 370.2M893.3 295.0L893.8 308.1M1013.1 289.6L1025.0 272.7M1177.5 555.5L1177.2 534.0M1290.0 262.0L1302.5 271.0M1208.6 669.6L1194.0 673.0M1326.8 582.5L1316.1 593.1M1340.8 388.5L1342.5 373.9M1113.2 214.2L1119.8 234.2M935.6 363.1L958.9 342.5M871.0 435.0L873.0 420.0M928.5 580.3L918.7 590.9M1252.6 435.5L1272.9 433.5M910.0 266.5L922.0 288.2M953.0 318.6L943.2 296.6M1351.0 460.0L1342.8 467.8M873.0 420.0L875.0 405.0M963.0 583.8L950.4 569.6M1290.0 262.0L1274.8 271.0M1144.1 346.9L1147.5 362.7M950.4 569.6L940.9 550.7M1085.2 311.9L1094.6 311.4M1326.8 582.5L1314.8 582.0M1094.6 311.4L1103.9 310.9M1102.3 429.6L1122.0 422.5M1177.7 677.7L1166.9 668.3M1001.5 343.5L996.5 313.1M1205.0 222.3L1187.9 229.4M1040.0 672.0L1056.0 656.1M1029.4 351.9L1023.7 341.0M1041.0 474.4L1032.3 449.4M1161.3 682.3L1144.3 667.8M888.6 402.8L888.0 411.0M1052.1 535.8L1060.6 559.7M1272.3 456.0L1267.6 467.4M1156.8 532.7L1137.2 551.4M1046.4 422.1L1015.8 407.8M1336.2 402.5L1328.6 415.6M1026.1 527.8L1036.2 553.0M1252.7 462.4L1247.6 473.5M1177.3 442.0L1179.0 418.8M1120.4 510.4L1109.7 530.5M1018.6 218.8L1040.7 215.0M1266.4 577.8L1267.3 591.3M1311.3 619.3L1309.6 601.4M1041.0 474.4L1017.7 465.4M1017.7 465.4L995.7 455.1M1332.1 466.7L1317.8 473.2M1087.8 261.8L1099.7 287.6M1261.1 485.4L1275.3 496.4M1190.4 300.4L1176.8 310.3M1056.2 275.6L1068.2 289.8M1213.6 626.6L1204.1 644.2M1126.3 373.6L1109.0 368.4M1105.3 627.7L1095.3 646.7M1317.8 473.2L1306.5 486.7M1239.1 490.7L1255.8 503.6M937.0 262.0L969.1 262.4M1003.3 621.7L992.0 638.5M1166.7 496.8L1146.3 511.7M1083.4 621.5L1072.4 640.2M1329.7 518.3L1320.6 525.0M1023.7 341.0L1001.5 343.5M1133.7 388.8L1126.3 373.6M882.0 572.0L884.7 553.2M1320.6 525.0L1303.9 535.2M1015.5 386.8L1015.8 407.8M1125.0 204.8L1113.2 214.2M1362.5 355.0L1341.2 358.9M1267.3 591.3L1251.1 600.6M1170.2 382.2L1169.9 394.3M1194.7 266.0L1174.2 275.5M1239.1 490.7L1247.6 473.5M1237.8 662.8L1247.8 650.3M1022.5 206.3L1018.6 218.8M931.1 452.2L911.3 452.8M1223.2 666.2L1228.5 657.1M1291.9 560.5L1301.4 574.5M1137.2 551.4L1127.2 569.3M1109.9 463.9L1129.1 477.4M1105.7 257.5L1094.6 234.1M1319.8 313.2L1308.7 337.9M1108.9 587.6L1096.2 609.0M962.8 240.4L969.1 262.4M1315.0 280.0L1325.0 290.0M1152.3 386.5L1147.5 362.7M1223.2 666.2L1204.1 644.2M1239.4 364.2L1268.6 349.3M1211.6 514.5L1189.1 515.0M879.3 376.7L892.3 373.8M945.6 469.7L931.1 452.2M1325.0 290.0L1335.0 300.0M1177.7 677.7L1161.3 682.3M935.0 243.6L948.6 250.6M1090.4 527.3L1065.3 521.7M1161.3 682.3L1145.0 687.0M875.0 405.0L877.0 390.0M995.7 455.1L993.3 475.7M1171.8 294.8L1188.7 281.9M1345.7 486.7L1323.9 490.5M877.0 390.0L879.3 376.7M892.8 545.3L884.7 553.2M1071.1 267.9L1048.5 248.2M1029.4 351.9L1015.5 386.8M1234.3 303.0L1254.6 287.9M1127.6 278.3L1118.9 293.1M1239.4 364.2L1255.9 332.2M1186.5 627.1L1174.7 627.8M1013.3 522.4L1026.1 527.8M1315.0 280.0L1307.2 298.5M1090.3 488.1L1104.0 472.9M932.2 539.7L923.6 528.7M1186.9 376.1L1177.6 354.7M1224.6 348.9L1214.5 359.2M1331.8 449.7L1314.9 439.9M1325.0 290.0L1319.8 313.2M1113.3 310.4L1125.5 311.9M1249.6 396.2L1268.2 406.6M1251.1 518.0L1255.8 503.6M1244.0 633.3L1221.8 641.3M1186.9 376.1L1200.4 388.2M1021.3 329.5L1022.1 317.8M1231.3 467.1L1225.9 477.9M928.1 274.6L928.5 282.2M1030.2 650.3L1009.4 644.4M941.3 441.7L931.1 452.2M1087.8 261.8L1082.4 282.5M1171.9 337.8L1189.9 336.2M1071.1 267.9L1064.5 235.6M1318.3 427.6L1305.4 438.5M1208.5 470.1L1202.9 480.5M960.8 392.5L965.9 370.2M1207.5 297.7L1190.4 300.4M1076.4 504.6L1065.3 521.7M1292.3 639.3L1280.9 623.2M1215.9 494.4L1211.6 514.5M863.0 497.5L876.9 501.1M1130.0 631.1L1135.6 650.9M1067.0 677.5L1053.5 674.8M1000.7 270.0L1013.8 252.3M1340.3 514.0L1329.7 518.3M1191.6 496.4L1189.1 515.0M1254.6 287.9L1238.8 272.9M893.3 295.0L922.0 288.2M1161.9 550.7L1137.2 551.4M1291.0 389.4L1289.9 355.6M992.0 493.3L993.3 475.7M1228.6 292.1L1220.7 316.4M1337.7 528.0L1329.7 518.3M928.5 282.2L943.2 296.6M1135.9 594.0L1108.9 587.6M990.0 653.0L1009.4 644.4M918.6 317.3L893.8 308.1M1274.0 532.0L1273.7 543.8M871.0 435.0L885.4 441.7M1270.0 250.0L1255.4 258.7M1156.7 209.8L1163.4 222.7M1191.6 496.4L1178.9 481.3M1013.3 597.2L1030.1 591.1M1080.5 680.2L1076.5 663.3M1284.1 532.2L1303.9 535.2M1163.8 341.9L1155.6 345.9M873.0 420.0L881.5 427.2M1057.9 316.8L1039.4 320.4M1173.3 213.7L1187.9 229.4M918.7 438.8L897.7 441.2M1087.8 261.8L1105.7 257.5M1230.3 519.4L1211.6 514.5M1120.0 345.0L1126.3 373.6M1060.9 450.4L1055.3 458.7M974.0 591.7L982.4 610.8M918.6 317.3L953.0 318.6M928.1 274.6L937.0 262.0M905.3 426.1L890.3 427.4M995.3 369.4L1001.5 343.5M1184.7 471.3L1160.1 470.6M1191.6 496.4L1166.7 496.8M1305.4 438.5L1288.3 419.9M1234.3 247.6L1255.4 258.7M894.9 357.6L890.1 342.0M1076.2 434.0L1102.3 429.6M927.1 347.9L958.9 342.5M1189.9 336.2L1177.6 354.7M1342.8 467.8L1333.8 476.2M1125.5 311.9L1134.9 292.9M1128.0 685.7L1094.0 683.0M1094.4 354.9L1109.0 368.4M890.5 584.5L882.0 572.0M971.0 223.5L979.4 231.6M1033.4 295.1L1051.3 300.6M924.4 467.8L911.3 452.8M1007.0 512.2L1013.3 522.4M1043.5 284.8L1068.2 289.8M1132.6 347.8L1147.5 362.7M885.2 463.1L879.6 452.6M1158.0 622.2L1154.6 605.6M1041.0 474.4L1055.3 458.7M1161.3 682.3L1166.9 668.3M1073.5 326.5L1068.9 305.3M941.3 568.1L925.0 552.9M1279.7 647.7L1264.4 643.4M1095.0 202.5L1088.4 212.6M1161.5 256.6L1174.2 275.5M1350.0 318.0L1336.9 343.6M1017.7 465.4L1032.3 449.4M1145.0 687.0L1144.3 667.8M1252.7 462.4L1267.6 467.4M1114.9 389.1L1109.0 368.4M1204.1 644.2L1180.9 647.1M1099.7 287.6L1112.2 278.8M890.3 427.4L881.5 427.2M992.0 638.5L971.7 624.3M907.1 401.5L888.6 402.8M1124.3 255.2L1112.2 278.8M1246.7 238.0L1258.3 244.0M877.2 476.8L874.4 489.7M1077.5 400.4L1076.2 434.0M1166.7 496.8L1169.6 514.3M1083.4 621.5L1095.3 646.7M1186.9 376.1L1194.1 350.7M1161.5 256.6L1187.9 229.4M948.6 250.6L969.1 262.4M865.0 480.0L867.0 465.0M1079.2 383.6L1061.8 400.8M1141.3 495.6L1146.3 511.7M931.5 472.0L931.1 452.2M1013.3 597.2L994.4 598.7M874.0 558.5L884.7 553.2M1063.3 378.0L1071.8 355.7M1208.5 273.3L1188.7 281.9M1365.0 370.0L1341.2 358.9M1196.2 538.2L1206.7 530.6M1088.4 212.6L1094.6 234.1M1079.2 383.6L1063.3 378.0M1141.3 495.6L1129.1 477.4M912.3 388.5L943.6 385.2M1137.2 551.4L1150.5 569.7M1144.1 346.9L1132.6 347.8M1115.7 492.7L1104.0 472.9M1335.0 542.0L1329.6 533.3M1200.4 388.2L1223.3 380.2M1115.7 551.8L1127.2 569.3M1026.2 306.2L1039.4 320.4M1108.9 587.6L1120.2 607.6M1124.3 255.2L1143.1 254.9M1015.8 430.8L1010.7 438.6M1249.6 396.2L1220.9 403.6M948.6 250.6L962.8 240.4M1085.6 587.3L1096.2 609.0M983.5 293.0L959.3 283.1M1141.3 495.6L1115.7 492.7M1071.1 267.9L1082.4 282.5M1307.7 376.5L1317.1 394.4M1115.7 492.7L1090.3 488.1M1133.7 388.8L1147.5 362.7M943.6 385.2L932.8 370.2M1272.3 456.0L1252.6 435.5M1118.9 293.1L1112.2 278.8M1323.9 490.5L1308.8 497.7M973.4 324.1L958.9 342.5M1096.5 387.4L1093.1 400.1M897.7 441.2L890.3 427.4M1193.6 316.4L1189.9 336.2M1017.2 533.4L1026.1 527.8M1325.0 290.0L1307.2 298.5M1234.3 247.6L1238.8 272.9M1235.0 232.0L1234.3 247.6M1014.7 664.7L1009.4 644.4M995.7 455.1L990.8 426.7M1322.3 554.4L1315.4 562.8M1164.9 365.5L1177.6 354.7M1246.7 238.0L1255.4 258.7M1186.9 376.1L1185.1 391.3M1269.2 522.9L1255.8 503.6M908.0 541.4L899.5 528.6M1290.0 448.0L1272.9 433.5M875.0 405.0L888.6 402.8M975.1 443.6L990.8 426.7M1111.0 684.3L1102.2 663.6M1312.7 512.5L1320.6 525.0M1208.5 470.1L1225.9 477.9M1281.8 635.6L1264.4 643.4M877.0 390.0L886.9 384.5M927.1 347.9L953.0 318.6M1015.8 407.8L1043.3 392.7M1264.4 643.4L1247.8 650.3M946.9 378.0L965.9 370.2M1113.3 310.4L1118.9 293.1M1052.0 596.3L1035.0 612.0M1143.0 419.2L1155.7 435.4M1015.8 430.8L1015.8 407.8M1255.9 332.2L1260.0 312.1M1270.0 250.0L1282.0 251.0M1290.3 491.5L1275.3 496.4M925.2 489.4L901.4 493.5M1282.0 251.0L1290.0 262.0M1191.6 496.4L1211.6 514.5M1237.8 662.8L1223.2 666.2M1035.0 612.0L1028.4 630.3M1057.9 316.8L1068.9 305.3M1177.2 534.0L1156.8 532.7M1223.2 666.2L1208.6 669.6M1090.3 488.1L1076.4 504.6M925.0 552.9L915.2 567.6M869.0 450.0L871.0 435.0M1017.3 604.5L1028.4 630.3M1150.5 569.7L1127.2 569.3M1141.9 612.4L1120.2 607.6M1364.0 390.0L1342.5 373.9M974.0 591.7L963.0 583.8M1120.2 607.6L1096.2 609.0M1316.1 593.1L1309.6 601.4M1173.3 213.7L1163.4 222.7M1054.0 203.6L1064.1 212.9M1353.5 444.0L1340.6 451.3M1309.6 601.4L1295.5 613.4M1190.0 217.5L1187.9 229.4M1049.5 370.7L1038.0 361.9M1194.0 673.0L1190.6 665.8M1288.9 545.7L1311.2 553.7M1119.7 666.7L1102.2 663.6M1068.0 202.6L1064.1 212.9M1038.0 361.9L1029.4 351.9M896.5 413.7L890.3 427.4M1065.3 482.0L1055.3 458.7M1274.0 532.0L1284.1 532.2M1074.2 545.4L1079.8 564.4M1169.6 514.3L1156.8 532.7M1340.8 388.5L1336.2 402.5M1087.8 261.8L1112.2 278.8M1171.9 337.8L1177.6 354.7M1043.0 577.5L1052.0 596.3M953.0 318.6L983.5 293.0M1273.7 543.8L1284.1 532.2M998.1 224.4L1018.6 218.8M990.6 250.2L969.1 262.4M1128.0 685.7L1111.0 684.3M1329.5 569.0L1315.4 562.8M1065.3 482.0L1041.0 474.4M931.5 472.0L914.4 479.9M894.6 505.0L876.9 501.1M1281.6 478.5L1275.3 496.4M881.7 363.3L884.0 350.0M1214.5 359.2L1194.1 350.7M1204.1 644.2L1228.5 657.1M922.8 509.8L925.2 489.4M1137.8 313.3L1150.0 316.6M995.3 369.4L965.9 370.2M1018.6 218.8L1013.8 252.3M1350.0 318.0L1329.8 328.3M890.5 584.5L894.0 570.4M1150.0 316.6L1162.2 320.0M1360.0 340.0L1336.9 343.6M990.0 211.0L998.1 224.4M1033.4 295.1L1043.5 284.8M890.3 427.4L885.4 441.7M1160.1 470.6L1154.2 480.3M1021.2 544.4L1036.2 553.0M1044.2 511.8L1026.1 527.8M1252.4 659.4L1264.4 643.4M1272.3 456.0L1252.7 462.4M888.0 411.0L881.5 427.2M1315.4 562.8L1314.8 582.0M995.3 369.4L1015.5 386.8M1161.9 550.7L1150.5 569.7M1252.7 462.4L1231.3 467.1M1138.4 217.6L1163.4 222.7M1135.0 468.1L1154.2 480.3M1158.0 622.2L1141.9 612.4M1301.4 574.5L1304.1 592.1M1023.6 563.3L1036.2 553.0M1011.3 483.2L1024.3 508.6M1135.9 594.0L1120.2 607.6M1163.4 222.7L1187.9 229.4M939.4 417.6L924.7 403.3M1049.5 370.7L1057.4 346.1M924.7 403.3L912.3 388.5M1255.8 503.6L1231.6 507.1M1093.1 400.1L1076.2 434.0M1302.5 271.0L1315.0 280.0M1071.8 355.7L1077.6 341.6M1231.6 507.1L1211.6 514.5M1130.5 532.3L1109.7 530.5M1046.7 635.6L1056.0 656.1M1194.0 673.0L1177.7 677.7M1041.0 474.4L1035.4 492.2M1274.0 532.0L1281.7 516.6M1109.7 530.5L1090.4 527.3M980.6 346.6L958.9 342.5M1280.9 623.2L1281.8 635.6M1127.2 569.3L1101.6 570.4M899.5 528.6L892.8 545.3M1101.6 570.4L1079.8 564.4M1096.2 609.0L1078.1 604.1M954.3 629.7L971.7 624.3M1113.2 214.2L1094.6 234.1M1078.1 604.1L1052.0 596.3M1302.5 271.0L1292.1 284.3M1205.0 222.3L1211.7 237.8M1115.7 492.7L1129.1 477.4M1040.0 672.0L1030.2 650.3M1052.1 535.8L1036.2 553.0M1280.9 623.2L1260.4 632.0M1201.8 368.4L1200.4 388.2M1033.4 295.1L1039.4 320.4M1268.2 406.6L1288.3 419.9M995.5 419.0L1010.7 438.6M1076.5 663.3L1056.0 656.1M1000.7 270.0L990.6 250.2M1234.3 303.0L1260.0 312.1M1255.9 332.2L1282.3 316.3M1362.5 355.0L1365.0 370.0M1098.5 335.9L1077.6 341.6M1037.7 441.3L1046.4 422.1M1365.0 370.0L1364.0 390.0M1094.0 683.0L1080.5 680.2M1252.7 462.4L1252.6 435.5M1223.3 380.2L1220.9 403.6M1360.0 409.0L1340.8 388.5M1239.1 490.7L1231.6 507.1M1051.3 300.6L1068.9 305.3M1080.5 680.2L1067.0 677.5M885.9 332.9L887.8 315.8M965.9 370.2L958.9 342.5M1282.3 316.3L1268.6 349.3M892.6 453.1L885.4 441.7M1079.2 383.6L1093.1 400.1M887.8 315.8L893.3 295.0M1230.3 519.4L1251.1 518.0M1255.4 258.7L1238.8 272.9M1162.2 320.0L1176.8 310.3M1162.2 320.0L1176.3 327.4M1236.1 422.0L1234.8 444.6M1170.2 382.2L1185.1 391.3M1239.1 490.7L1225.9 477.9M1111.0 684.3L1119.7 666.7M1176.3 327.4L1171.9 337.8M1272.3 456.0L1272.9 433.5M1237.8 662.8L1228.5 657.1M877.0 390.0L888.6 402.8M1140.0 206.0L1138.4 217.6M1135.6 650.9L1117.7 645.8M1022.5 206.3L1040.7 215.0M1056.2 275.6L1071.1 267.9M1329.7 518.3L1329.6 533.3M1109.9 463.9L1104.0 472.9M879.3 376.7L886.9 384.5M918.7 590.9L903.6 583.9M1231.3 467.1L1208.5 470.1M1320.6 525.0L1320.1 541.5M1085.1 458.0L1079.3 466.6M1125.5 311.9L1118.9 293.1M1187.9 229.4L1211.7 237.8M1332.1 466.7L1342.8 467.8M1343.0 500.0L1328.8 504.4M1267.3 591.3L1273.2 608.5M1206.7 530.6L1198.9 531.2M995.5 419.0L1015.8 407.8M1214.5 359.2L1209.5 329.1M1211.7 237.8L1234.3 247.6M912.3 388.5L902.3 373.2M1152.3 386.5L1164.9 365.5M902.3 373.2L894.9 357.6M995.7 455.1L976.0 461.9M1235.9 326.2L1220.7 316.4M1189.1 515.0L1169.6 514.3M1046.4 422.1L1076.2 434.0M1236.1 422.0L1220.9 403.6M1096.5 387.4L1082.6 367.6M1194.1 350.7L1189.9 336.2M1266.4 577.8L1259.4 584.7M1065.3 521.7L1044.2 511.8M901.4 493.5L891.1 480.1M1356.0 428.0L1344.1 437.6M973.2 479.1L976.0 461.9M1351.0 460.0L1340.6 451.3M922.0 288.2L928.5 282.2M1065.3 482.0L1079.3 466.6M1292.3 639.3L1281.8 635.6M1190.4 300.4L1171.8 294.8M1169.9 394.3L1179.0 418.8M1178.8 260.4L1194.7 266.0M881.7 363.3L894.9 357.6M1236.7 314.5L1260.0 312.1M1081.5 202.6L1064.1 212.9M911.3 452.8L892.6 453.1M1060.9 450.4L1037.7 441.3M1015.8 407.8L990.1 390.9M1064.5 235.6L1094.6 234.1M1068.2 289.8L1051.3 300.6M1319.8 313.2L1329.8 328.3M1143.0 419.2L1179.0 418.8M1272.1 380.8L1268.6 349.3M1329.5 569.0L1322.3 554.4M894.6 505.0L888.2 513.4M1267.6 467.4L1247.6 473.5M863.0 497.5L874.4 489.7M1364.0 390.0L1360.0 409.0M884.1 489.9L876.9 501.1M922.0 288.2L943.2 296.6M1055.0 496.9L1035.4 492.2M1191.6 496.4L1169.6 514.3M1360.0 409.0L1356.0 428.0M1201.8 368.4L1194.1 350.7M1048.5 248.2L1064.5 235.6M921.4 332.5L890.1 342.0M1053.5 674.8L1040.0 672.0M901.7 277.0L910.0 266.5M1284.5 585.6L1267.3 591.3M1329.6 533.3L1320.1 541.5M1270.0 250.0L1274.8 271.0M1177.5 555.5L1185.8 545.8M1163.8 341.9L1164.9 365.5M865.0 480.0L877.2 476.8M939.4 417.6L957.0 399.8M876.9 501.1L874.4 489.7M1288.6 601.7L1273.2 608.5M924.7 403.3L943.6 385.2M1068.2 289.8L1082.4 282.5M1095.3 646.7L1072.4 640.2M1301.4 574.5L1314.8 582.0M894.0 570.4L884.7 553.2M1135.9 594.0L1141.9 612.4M1284.5 585.6L1304.1 592.1M1037.7 441.3L1032.3 449.4M1054.0 203.6L1068.0 202.6M963.0 583.8L956.8 579.6M953.0 318.6L959.3 283.1M1038.0 361.9L1057.4 346.1M1343.0 500.0L1340.3 514.0M1291.0 389.4L1307.7 376.5M1043.3 340.0L1039.4 320.4M950.4 569.6L941.3 568.1M1041.0 474.4L1055.0 496.9M978.0 645.0L966.0 637.0M1260.4 632.0L1281.8 635.6M1154.6 397.4L1143.0 419.2M1109.9 463.9L1131.0 446.6M1103.9 310.9L1113.3 310.4M1154.6 605.6L1135.9 594.0M1240.0 597.2L1228.9 607.6M1013.8 252.3L1029.6 237.9M1220.0 227.2L1211.7 237.8M1095.0 202.5L1113.2 214.2M1023.7 341.0L1021.3 329.5M1017.7 465.4L1010.7 438.6M1046.4 422.1L1043.3 392.7M1328.6 415.6L1318.3 427.6M924.4 467.8L914.4 479.9M1208.5 273.3L1220.0 282.1M935.6 363.1L932.8 370.2M1040.7 215.0L1064.1 212.9M1015.8 430.8L995.5 419.0M1307.7 376.5L1314.7 357.4M877.2 476.8L870.4 473.2M1336.9 343.6L1341.2 358.9M1259.4 584.7L1267.3 591.3M1249.7 591.0L1251.1 600.6M1306.5 486.7L1290.3 491.5M1135.6 650.9L1144.3 667.8M1252.4 659.4L1237.8 662.8M1079.2 383.6L1077.5 400.4M927.1 347.9L902.3 373.2M1141.3 495.6L1120.4 510.4M1198.9 531.2L1177.2 534.0M956.8 579.6L945.3 595.7M1291.0 389.4L1317.1 394.4M1115.7 492.7L1101.2 508.4M1303.9 535.2L1288.9 545.7M941.3 568.1L928.5 580.3M1015.5 386.8L1043.3 392.7M1176.3 327.4L1176.8 310.3M1365.0 370.0L1342.5 373.9M1114.9 389.1L1126.3 373.6M1308.7 337.9L1314.7 357.4M912.3 388.5L932.8 370.2M1040.0 204.7L1040.7 215.0M1253.1 611.5L1233.7 619.3M1335.0 542.0L1320.1 541.5M1214.5 359.2L1223.3 380.2M1115.7 551.8L1101.6 570.4M1320.6 525.0L1329.6 533.3M1085.1 458.0L1104.0 472.9M1166.9 668.3L1144.3 667.8M1085.6 587.3L1078.1 604.1M1303.9 535.2L1320.1 541.5M1267.3 591.3L1288.6 601.7M1127.2 569.3L1135.9 594.0M995.5 419.0L972.8 413.6M1329.8 328.3L1308.7 337.9M1085.2 311.9L1089.6 329.6M1340.3 514.0L1328.8 504.4M1251.1 600.6L1273.2 608.5M891.1 480.1L877.2 476.8M1108.8 399.7L1122.0 422.5M1252.6 435.5L1234.8 444.6M1244.0 633.3L1247.8 650.3M1145.0 687.0L1128.0 685.7M1231.8 337.8L1220.7 316.4M907.6 518.3L888.2 513.4M1221.8 641.3L1228.5 657.1M1131.0 446.6L1102.3 429.6M1060.6 559.7L1036.2 553.0M1079.2 383.6L1082.6 367.6M879.3 376.7L881.7 363.3M1096.5 387.4L1108.8 399.7M1124.3 255.2L1119.8 234.2M1291.0 389.4L1272.1 380.8M923.6 528.7L922.8 509.8M973.2 479.1L993.3 475.7M1162.2 320.0L1151.0 292.4M1125.5 311.9L1137.8 313.3M1169.2 565.3L1161.9 550.7M1217.8 618.0L1198.3 626.4M1221.8 641.3L1204.1 644.2M1118.9 293.1L1134.9 292.9M1022.1 317.8L1026.2 306.2M975.1 443.6L972.8 413.6M911.3 452.8L902.4 467.7M1235.9 326.2L1231.8 337.8M1009.4 644.4L992.0 638.5M956.3 431.1L957.0 399.8M1305.4 438.5L1290.0 448.0M897.7 441.2L892.6 453.1M1073.5 326.5L1077.6 341.6M1088.4 212.6L1113.2 214.2M1113.2 214.2L1138.4 217.6M975.1 443.6L956.3 431.1M956.3 431.1L939.4 417.6M994.4 598.7L1017.3 604.5M1288.6 601.7L1295.5 613.4M1073.5 326.5L1057.4 346.1M928.5 282.2L959.3 283.1M921.4 332.5L894.9 357.6M1318.3 427.6L1344.1 437.6M1064.1 212.9L1064.5 235.6M953.0 318.6L958.9 342.5M1275.3 496.4L1255.8 503.6M1207.5 297.7L1188.7 281.9M925.0 552.9L901.1 559.4M1095.3 646.7L1102.2 663.6M1017.3 604.5L1003.3 621.7M1156.8 532.7L1130.5 532.3M1240.0 597.2L1253.1 611.5M1065.3 482.0L1055.0 496.9M1088.4 212.6L1064.5 235.6M1194.1 350.7L1177.6 354.7M908.0 541.4L901.1 559.4M1234.3 303.0L1220.7 316.4M1282.0 251.0L1274.8 271.0M1155.6 345.9L1147.5 362.7M1160.1 470.6L1131.0 446.6M924.7 403.3L957.0 399.8M1342.5 373.9L1307.7 376.5M1288.9 545.7L1291.9 560.5M1090.4 527.3L1097.0 546.9M896.5 413.7L888.0 411.0M1074.2 545.4L1060.6 559.7M1160.1 470.6L1135.0 468.1M1295.5 613.4L1280.9 623.2M1228.6 292.1L1238.8 272.9M1037.7 441.3L1055.3 458.7M1043.0 577.5L1030.1 591.1M1214.6 443.7L1234.8 444.6M1255.4 258.7L1274.8 271.0M1290.3 491.5L1308.8 497.7M1193.6 316.4L1209.5 329.1M960.8 392.5L943.6 385.2M901.4 493.5L907.6 518.3M950.4 569.6L956.8 579.6M1350.0 318.0L1360.0 340.0M1208.5 273.3L1207.5 297.7M1314.9 439.9L1301.5 450.5M1146.3 511.7L1120.4 510.4M1360.0 340.0L1362.5 355.0M1190.4 300.4L1188.7 281.9M1056.2 275.6L1025.0 272.7M1120.4 510.4L1101.2 508.4M1204.1 644.2L1190.6 665.8M1124.3 255.2L1127.6 278.3M1111.0 684.3L1094.0 683.0M939.4 417.6L941.3 441.7M931.1 452.2L918.7 438.8M1180.9 647.1L1166.9 668.3M1043.5 284.8L1051.3 300.6M1143.1 254.9L1147.9 271.8M914.4 479.9L902.4 467.7M884.0 350.0L885.9 332.9M1154.6 605.6L1154.3 594.8M1319.8 313.2L1282.3 316.3M902.4 467.7L892.6 453.1M894.6 505.0L884.1 489.9M1057.4 346.1L1077.6 341.6M1158.0 586.0L1135.9 594.0M884.1 489.9L877.2 476.8M1110.0 203.7L1113.2 214.2M1360.0 340.0L1341.2 358.9M1025.0 272.7L1013.8 252.3M885.9 332.9L890.1 342.0M1180.9 647.1L1160.0 651.4M1179.0 418.8L1210.3 422.1M1252.4 659.4L1247.8 650.3M1005.0 208.0L1018.6 218.8M927.1 347.9L932.8 370.2M1228.6 292.1L1207.5 297.7M1043.5 284.8L1056.2 275.6M1021.3 329.5L1039.4 320.4M1135.0 468.1L1129.1 477.4M936.2 605.6L918.7 590.9M990.0 211.0L1005.0 208.0M1196.2 538.2L1198.9 531.2M1249.7 591.0L1267.3 591.3M1141.9 612.4L1130.0 631.1M867.0 465.0L870.4 473.2M1353.5 444.0L1351.0 460.0M1013.3 522.4L1024.3 508.6M1351.0 460.0L1348.3 473.3M1027.3 668.3L1014.7 664.7M1253.1 611.5L1260.4 632.0M1115.7 492.7L1120.4 510.4M1046.7 635.6L1030.2 650.3M1014.7 664.7L1002.0 661.0M1236.7 314.5L1220.7 316.4M1041.0 474.4L1011.3 483.2M918.3 256.0L935.0 243.6M941.3 568.1L945.3 595.7M899.5 528.6L881.9 532.2M1017.7 465.4L993.3 475.7M935.0 243.6L951.7 233.9M1273.3 555.6L1269.8 566.7M1260.4 632.0L1247.8 650.3M888.2 513.4L876.4 516.2M1217.8 618.0L1213.6 626.6M1049.5 370.7L1071.8 355.7M1038.0 361.9L1015.5 386.8M1269.8 566.7L1266.4 577.8M1021.3 329.5L1043.3 340.0M1046.7 635.6L1028.4 630.3M1137.8 313.3L1151.0 292.4M902.3 373.2L932.8 370.2M885.2 463.1L870.4 473.2M1132.6 347.8L1120.0 345.0M1201.8 368.4L1223.3 380.2M1143.1 254.9L1161.5 256.6M1308.8 497.7L1328.8 504.4M995.5 419.0L990.8 426.7M1109.9 463.9L1085.1 458.0M891.1 480.1L884.1 489.9M977.1 406.2L972.8 413.6M1311.2 553.7L1322.3 554.4M1085.1 458.0L1060.9 450.4M885.2 463.1L877.2 476.8M1292.1 284.3L1307.2 298.5M1040.7 215.0L1048.5 248.2M1230.3 519.4L1218.5 525.0M1292.1 284.3L1254.6 287.9M1124.1 398.9L1122.0 422.5M1307.2 298.5L1319.8 313.2M932.2 539.7L925.0 552.9M1364.0 390.0L1340.8 388.5M1301.5 450.5L1285.6 459.7M1063.3 378.0L1043.3 392.7M907.6 518.3L899.5 528.6M923.6 528.7L908.0 541.4M1360.0 409.0L1336.2 402.5M1221.8 641.3L1247.8 650.3M1285.6 459.7L1267.6 467.4M1101.2 508.4L1076.4 504.6M1085.2 311.9L1068.9 305.3M1273.3 555.6L1288.9 545.7M1076.4 504.6L1055.0 496.9M1282.3 316.3L1308.7 337.9M1184.7 471.3L1195.8 451.1M918.7 438.8L905.3 426.1M1174.7 627.8L1150.9 627.4M915.2 567.6L903.6 583.9M1143.1 254.9L1119.8 234.2M905.3 426.1L896.5 413.7M1040.7 215.0L1064.5 235.6M983.4 484.6L993.3 475.7M1152.3 386.5L1139.3 398.2M1015.5 386.8L990.1 390.9M1158.0 622.2L1150.9 627.4M1348.3 473.3L1342.8 467.8M885.4 441.7L881.5 427.2M1177.5 555.5L1161.9 550.7M869.0 450.0L885.4 441.7M1000.7 270.0L1013.1 289.6M1228.6 292.1L1234.3 303.0M1314.8 582.0L1304.1 592.1M956.3 431.1L972.8 413.6M990.0 211.0L971.0 223.5M1210.3 422.1L1220.9 403.6M1318.3 427.6L1317.1 394.4M1332.1 466.7L1333.8 476.2M1344.1 437.6L1331.8 449.7M1022.5 206.3L1040.0 204.7M983.5 293.0L1013.1 289.6M1288.6 601.7L1309.6 601.4M1154.2 480.3L1129.1 477.4M1096.2 609.0L1083.4 621.5M959.3 283.1L943.2 296.6M1040.0 204.7L1054.0 203.6M1348.3 473.3L1345.7 486.7M1026.2 306.2L1013.1 289.6M960.3 449.8L941.3 441.7M1021.6 575.1L1043.0 577.5M1147.5 362.7L1126.3 373.6M1345.7 486.7L1343.0 500.0M1002.0 661.0L990.0 653.0M1033.4 295.1L1025.0 272.7M1143.0 419.2L1122.0 422.5M1065.3 482.0L1076.4 504.6M1297.9 524.1L1284.1 532.2M990.0 653.0L978.0 645.0M885.9 332.9L921.4 332.5M951.7 233.9L971.0 223.5M1228.9 607.6L1253.1 611.5M975.1 443.6L960.3 449.8M1154.3 594.8L1135.9 594.0M1060.9 450.4L1076.2 434.0M1259.4 584.7L1249.7 591.0M1150.9 627.4L1130.0 631.1M1107.4 342.2L1098.5 335.9M1102.2 663.6L1076.5 663.3M1081.5 202.6L1088.4 212.6M982.4 610.8L962.2 605.8M1060.6 559.7L1064.3 578.7M960.8 392.5L957.0 399.8M1281.7 516.6L1297.9 524.1M1278.1 568.0L1284.5 585.6M1068.2 289.8L1068.9 305.3M946.9 378.0L943.6 385.2M1105.7 257.5L1112.2 278.8M1162.2 320.0L1171.8 294.8M1125.0 204.8L1140.0 206.0M1220.0 282.1L1207.5 297.7M1000.7 502.0L1024.3 508.6M1329.5 569.0L1326.8 582.5M884.1 489.9L874.4 489.7M1329.8 328.3L1336.9 343.6M867.0 465.0L885.2 463.1M915.0 606.0L899.0 597.0M1180.9 647.1L1190.6 665.8M1061.8 400.8L1076.2 434.0M1147.9 271.8L1174.2 275.5M1143.1 254.9L1127.6 278.3M1207.5 297.7L1193.6 316.4M1208.5 273.3L1211.7 237.8M894.9 357.6L892.3 373.8M1160.0 651.4L1166.9 668.3M992.0 493.3L1000.7 502.0M1161.5 256.6L1147.9 271.8M922.8 509.8L907.6 518.3M1158.0 586.0L1154.3 594.8M1085.2 311.9L1073.5 326.5M1000.7 502.0L1007.0 512.2M1171.8 294.8L1174.2 275.5M1194.7 266.0L1188.7 281.9M1174.7 627.8L1158.0 622.2M1029.4 351.9L1043.3 340.0M1266.4 577.8L1278.1 568.0M1214.5 359.2L1201.8 368.4M1317.2 460.6L1301.5 450.5M1005.0 208.0L998.1 224.4M1077.5 400.4L1093.1 400.1M1337.7 528.0L1329.6 533.3M1022.1 317.8L1039.4 320.4M1340.6 451.3L1350.9 451.7M937.0 262.0L959.3 283.1M1284.5 585.6L1288.6 601.7M1194.1 350.7L1209.5 329.1M1150.5 569.7L1135.9 594.0M935.6 363.1L927.1 347.9M1141.9 612.4L1150.9 627.4M925.8 427.6L918.7 438.8M1193.6 316.4L1220.7 316.4M1120.2 607.6L1130.0 631.1M1317.2 460.6L1300.4 470.2M1255.4 258.7L1254.6 287.9M901.4 493.5L884.1 489.9M1104.0 472.9L1079.3 466.6M1068.0 202.6L1081.5 202.6M1190.4 300.4L1193.6 316.4M1085.2 311.9L1099.7 287.6M925.8 427.6L913.0 415.6M1017.7 465.4L1011.3 483.2M1260.4 632.0L1264.4 643.4M888.2 513.4L881.9 532.2M1217.8 618.0L1233.7 619.3M1143.1 254.9L1138.4 217.6M1079.8 564.4L1060.6 559.7M876.9 501.1L876.4 516.2M1254.6 287.9L1260.0 312.1M1231.3 467.1L1234.8 444.6M1198.3 626.4L1213.6 626.6M1137.2 551.4L1115.7 551.8M940.9 550.7L932.2 539.7M1052.0 596.3L1030.1 591.1M1235.9 326.2L1255.9 332.2M1150.0 316.6L1151.0 292.4M1108.9 587.6L1085.6 587.3M978.0 645.0L992.0 638.5M1260.4 632.0L1244.0 633.3M1105.3 627.7L1083.4 621.5M924.4 467.8L902.4 467.7M1056.0 656.1L1030.2 650.3M945.3 595.7L928.5 580.3M1177.3 442.0L1195.8 451.1M1336.2 402.5L1317.1 394.4M914.4 479.9L901.4 493.5M1109.9 463.9L1102.3 429.6M1231.8 337.8L1239.4 364.2M1185.8 545.8L1177.2 534.0M1156.7 209.8L1173.3 213.7M1231.8 337.8L1209.5 329.1M1324.0 596.0L1316.1 593.1M1356.0 428.0L1336.2 402.5M1344.1 437.6L1340.6 451.3M1013.3 597.2L1017.3 604.5M1324.0 596.0L1317.7 607.7M1314.8 582.0L1316.1 593.1M1135.6 650.9L1119.7 666.7M915.2 567.6L918.7 590.9M927.1 347.9L894.9 357.6M1328.6 415.6L1344.1 437.6M1186.9 376.1L1164.9 365.5M1304.1 592.1L1309.6 601.4M893.3 295.0L901.7 277.0M1223.3 380.2L1249.6 396.2M941.3 568.1L915.2 567.6M1117.7 645.8L1119.7 666.7M1094.4 354.9L1077.6 341.6M1023.6 563.3L1043.0 577.5M1269.2 522.9L1274.0 532.0M1133.7 388.8L1139.3 398.2M1013.3 522.4L1017.2 533.4M1171.9 337.8L1163.8 341.9M945.6 469.7L960.3 449.8M1154.6 605.6L1158.0 586.0M1061.8 400.8L1043.3 392.7M1214.5 359.2L1239.4 364.2M1071.1 267.9L1087.8 261.8M1186.9 376.1L1170.2 382.2M1130.5 532.3L1137.2 551.4M1208.5 470.1L1184.7 471.3M1303.9 535.2L1311.2 553.7M1108.8 399.7L1124.1 398.9M1109.0 368.4L1082.6 367.6M1268.2 406.6L1236.1 422.0M1127.2 569.3L1108.9 587.6M877.2 476.8L866.8 487.5M1085.2 311.9L1082.4 282.5M1317.8 473.2L1333.8 476.2M1000.7 270.0L969.1 262.4M1251.1 600.6L1253.1 611.5M1101.6 570.4L1085.6 587.3M921.4 332.5L918.6 317.3M1096.2 609.0L1105.3 627.7M965.9 370.2L990.1 390.9M1089.6 329.6L1073.5 326.5M1078.1 604.1L1083.4 621.5M1174.7 627.8L1160.0 651.4M931.5 472.0L925.2 489.4M1335.0 542.0L1322.3 554.4M1033.4 295.1L1013.1 289.6M1268.2 406.6L1252.6 435.5M1169.6 514.3L1146.3 511.7M918.6 317.3L943.2 296.6M982.4 610.8L992.0 638.5M1119.8 234.2L1094.6 234.1M975.1 443.6L976.0 461.9M983.5 293.0L969.1 262.4M1044.2 511.8L1024.3 508.6M874.4 489.7L866.8 487.5M962.2 605.8L971.7 624.3M956.3 431.1L960.3 449.8M912.3 388.5L899.5 386.1M1255.9 332.2L1268.6 349.3M1249.6 396.2L1236.1 422.0M998.1 224.4L1013.8 252.3M1152.3 386.5L1169.9 394.3M907.6 518.3L894.6 505.0M923.6 528.7L907.6 518.3M1185.1 391.3L1210.3 422.1M1131.0 446.6L1155.7 435.4M1278.1 568.0L1301.4 574.5M897.7 441.2L885.4 441.7M1038.0 361.9L1043.3 340.0M884.0 350.0L894.9 357.6M1211.6 514.5L1198.9 531.2M1223.3 380.2L1239.4 364.2M892.6 453.1L879.6 452.6M1048.5 248.2L1029.6 237.9M1220.7 316.4L1209.5 329.1M962.8 240.4L979.4 231.6M1189.1 515.0L1198.9 531.2M1247.6 473.5L1225.9 477.9M865.0 480.0L870.4 473.2M1208.6 669.6L1204.1 644.2M959.3 283.1L969.1 262.4M1035.4 492.2L1011.3 483.2M1288.6 601.7L1280.9 623.2M1356.0 428.0L1353.5 444.0M1318.3 427.6L1331.8 449.7M1317.2 460.6L1317.8 473.2M1273.2 608.5L1260.4 632.0M888.6 402.8L886.9 384.5M1095.3 646.7L1076.5 663.3M1040.0 672.0L1027.3 668.3M1072.4 640.2L1056.0 656.1M1343.0 500.0L1323.9 490.5M881.9 532.2L884.7 553.2M1171.8 294.8L1176.8 310.3M910.0 266.5L918.3 256.0M1231.3 467.1L1214.6 443.7M1269.2 522.9L1281.7 516.6M908.0 541.4L892.8 545.3M1127.6 278.3L1112.2 278.8M1320.1 541.5L1311.2 553.7M915.0 606.0L918.7 590.9M1273.7 543.8L1273.3 555.6M1023.7 341.0L1043.3 340.0M1317.2 460.6L1314.9 439.9M1335.0 300.0L1319.8 313.2M1273.2 608.5L1253.1 611.5M1155.6 345.9L1164.9 365.5M1124.1 398.9L1143.0 419.2M1155.6 345.9L1144.1 346.9M1300.4 470.2L1301.5 450.5M1072.4 640.2L1046.7 635.6M1090.4 527.3L1074.2 545.4M1105.7 257.5L1124.3 255.2M884.7 553.2L871.3 538.8M1214.6 443.7L1195.8 451.1M1290.3 491.5L1296.7 509.1M1055.0 496.9L1065.3 521.7M973.4 324.1L996.5 313.1M1135.0 468.1L1109.9 463.9M901.4 493.5L894.6 505.0M960.8 392.5L990.1 390.9M1030.1 591.1L1017.3 604.5M1107.4 342.2L1109.0 368.4M1340.3 514.0L1337.7 528.0M1274.8 271.0L1292.1 284.3M1317.1 394.4L1288.3 419.9M966.0 637.0L954.3 629.7M940.9 550.7L941.3 568.1M1094.6 311.4L1099.7 287.6M939.4 417.6L925.8 427.6M1200.4 388.2L1220.9 403.6M945.6 469.7L963.0 473.6M1207.5 297.7L1220.7 316.4M945.3 595.7L936.2 605.6M924.7 403.3L913.0 415.6M963.0 473.6L973.2 479.1M1353.5 444.0L1350.9 451.7M990.6 250.2L1013.8 252.3M1329.5 569.0L1314.8 582.0M1228.9 607.6L1217.8 618.0M1231.8 337.8L1255.9 332.2M1292.1 284.3L1260.0 312.1M1067.0 677.5L1076.5 663.3M1236.7 314.5L1235.9 326.2M1039.4 320.4L1051.3 300.6M1220.0 282.1L1228.6 292.1M1103.9 310.9L1118.9 293.1M1290.0 448.0L1285.6 459.7M995.5 419.0L977.1 406.2M1328.6 415.6L1317.1 394.4M1085.1 458.0L1102.3 429.6M1224.6 348.9L1239.4 364.2M1290.0 448.0L1288.3 419.9M1094.4 354.9L1082.6 367.6M977.1 406.2L960.8 392.5M1196.2 538.2L1177.2 534.0M1341.2 358.9L1342.5 373.9M1146.3 511.7L1130.5 532.3M962.8 240.4L990.6 250.2M1202.9 480.5L1178.9 481.3M1224.6 348.9L1209.5 329.1M1317.7 607.7L1316.1 593.1M1005.0 208.0L1022.5 206.3M1304.1 592.1L1316.1 593.1M1178.9 481.3L1154.2 480.3M993.3 475.7L976.0 461.9M1253.1 611.5L1244.0 633.3M1137.8 313.3L1134.9 292.9M1143.0 419.2L1131.0 446.6M1170.2 382.2L1164.9 365.5M1057.4 346.1L1071.8 355.7M976.0 461.9L960.3 449.8M1233.7 619.3L1221.8 641.3M1328.8 504.4L1312.7 512.5M1133.7 388.8L1124.1 398.9M1312.7 512.5L1297.9 524.1M1028.4 630.3L1009.4 644.4M1311.2 553.7L1291.9 560.5M1291.9 560.5L1278.1 568.0M1114.9 389.1L1124.1 398.9M963.0 473.6L960.3 449.8M1178.8 260.4L1174.2 275.5M1233.7 619.3L1213.6 626.6M1128.0 685.7L1144.3 667.8M1096.5 387.4L1109.0 368.4M1261.1 485.4L1267.6 467.4M1308.8 497.7L1312.7 512.5M1028.4 630.3L1003.3 621.7M1087.8 261.8L1094.6 234.1M1101.6 570.4L1108.9 587.6M977.1 406.2L957.0 399.8M1296.7 509.1L1297.9 524.1M899.5 386.1L888.6 402.8M1003.3 621.7L982.4 610.8M1311.2 553.7L1315.4 562.8M1079.8 564.4L1085.6 587.3M1255.8 503.6L1260.4 520.3M1174.7 627.8L1180.9 647.1M1095.0 202.5L1110.0 203.7" stroke="#000" stroke-width="1.25" fill="none"/>
<path d="M1340.8 388.5 L1338.4 396.8 L1335.0 404.9 L1330.6 412.6 L1325.3 420.0 L1319.0 427.0 L1311.7 433.6 L1303.6 439.7 L1294.6 445.4 L1284.9 450.6 L1274.4 455.2 L1263.2 459.3 L1251.3 462.8 L1238.8 465.7 L1225.9 468.0 L1212.4 469.7 L1198.6 470.8 L1184.4 471.3 L1170.0 471.1 L1155.3 470.3 L1140.6 468.8 L1125.8 466.8 L1111.0 464.1 L1096.3 460.9 L1081.8 457.0 L1067.5 452.6 L1053.5 447.7 L1039.9 442.3 L1026.8 436.3 L1014.1 429.9 L1002.0 423.1 L990.6 415.9 L979.8 408.3 L969.7 400.4 L960.5 392.2 L952.0 383.7 L944.5 375.1 L937.8 366.3 L932.1 357.4 L927.3 348.4 L923.5 339.3 L920.8 330.3 L919.0 321.4 L918.3 312.5 L918.7 303.8 L920.0 295.3 L922.4 287.0 L925.8 278.9 L930.2 271.2 L935.5 263.8 L941.8 256.8 L949.1 250.2 L957.2 244.1 L966.2 238.4 L975.9 233.2 L986.4 228.6 L997.6 224.5 L1009.5 221.0 L1022.0 218.1 L1034.9 215.8 L1048.4 214.1 L1062.2 213.0 L1076.4 212.5 L1090.8 212.7 L1105.5 213.5 L1120.2 215.0 L1135.0 217.0 L1149.8 219.7 L1164.5 222.9 L1179.0 226.8 L1193.3 231.2 L1207.3 236.1 L1220.9 241.5 L1234.0 247.5 L1246.7 253.9 L1258.8 260.7 L1270.2 267.9 L1281.0 275.5 L1291.1 283.4 L1300.3 291.6 L1308.8 300.1 L1316.3 308.7 L1323.0 317.5 L1328.7 326.4 L1333.5 335.4 L1337.3 344.5 L1340.0 353.5 L1341.8 362.4 L1342.5 371.3 L1342.1 380.0 L1340.8 388.5ZM1236.7 314.5 L1236.7 320.5 L1235.8 326.5 L1234.1 332.5 L1231.5 338.4 L1228.1 344.2 L1223.9 349.8 L1218.9 355.2 L1213.2 360.3 L1206.8 365.1 L1199.8 369.6 L1192.3 373.6 L1184.2 377.3 L1175.6 380.5 L1166.7 383.2 L1157.5 385.5 L1148.1 387.2 L1138.5 388.4 L1128.8 389.1 L1119.2 389.2 L1109.6 388.8 L1100.2 387.9 L1091.0 386.4 L1082.1 384.4 L1073.5 381.9 L1065.5 379.0 L1057.9 375.5 L1050.9 371.6 L1044.6 367.4 L1038.9 362.7 L1034.0 357.8 L1029.8 352.5 L1026.4 347.0 L1023.8 341.3 L1022.1 335.5 L1021.3 329.5 L1021.3 323.5 L1022.2 317.5 L1023.9 311.5 L1026.5 305.6 L1029.9 299.8 L1034.1 294.2 L1039.1 288.8 L1044.8 283.7 L1051.2 278.9 L1058.2 274.4 L1065.7 270.4 L1073.8 266.7 L1082.4 263.5 L1091.3 260.8 L1100.5 258.5 L1109.9 256.8 L1119.5 255.6 L1129.2 254.9 L1138.8 254.8 L1148.4 255.2 L1157.8 256.1 L1167.0 257.6 L1175.9 259.6 L1184.5 262.1 L1192.5 265.0 L1200.1 268.5 L1207.1 272.4 L1213.4 276.6 L1219.1 281.3 L1224.0 286.2 L1228.2 291.5 L1231.6 297.0 L1234.2 302.7 L1235.9 308.5 L1236.7 314.5ZM1330.5 341.4 L1335.0 351.2 L1338.4 361.0 L1340.5 370.8 L1341.4 380.4 L1341.2 389.9 L1339.7 399.1 L1336.9 408.1 L1333.0 416.8 L1328.0 425.1 L1321.8 433.0 L1314.4 440.4 L1306.0 447.3 L1296.6 453.6 L1286.3 459.4 L1275.0 464.5 L1262.9 469.0 L1250.1 472.8 L1236.5 476.0 L1222.3 478.4 L1207.6 480.1 L1192.5 481.0 L1176.9 481.3 L1161.1 480.7 L1145.2 479.4 L1129.1 477.4 L1113.0 474.7 L1097.0 471.3 L1081.3 467.2 L1065.8 462.4 L1050.6 457.0 L1035.9 450.9 L1021.8 444.4 L1008.2 437.2 L995.4 429.6 L983.3 421.6 L972.1 413.1 L961.8 404.3 L952.4 395.2 L944.1 385.8 L936.8 376.3 L930.6 366.6 L925.6 356.8 L921.7 347.0 L919.1 337.2 L917.6 327.5 L917.4 318.0 L918.4 308.6 L920.5 299.5 L923.9 290.7 L928.5 282.2M1357.6 334.4 L1361.7 344.0 L1364.8 353.7 L1366.9 363.3 L1367.9 372.9 L1367.9 382.4 L1366.9 391.7 L1364.8 400.9 L1361.7 409.8 L1357.6 418.5 L1352.5 426.9 L1346.5 434.9 L1339.5 442.6 L1331.6 449.9 L1322.8 456.7 L1313.2 463.1 L1302.7 469.0 L1291.5 474.4 L1279.7 479.3 L1267.1 483.6 L1254.0 487.3 L1240.3 490.4 L1226.1 492.9 L1211.5 494.9 L1196.6 496.1 L1181.3 496.8 L1165.8 496.8 L1150.2 496.2 L1134.5 494.9 L1118.7 493.1 L1103.0 490.6 L1087.3 487.5 L1071.9 483.8 L1056.7 479.5 L1041.8 474.7 L1027.3 469.4 L1013.2 463.5 L999.6 457.1 L986.6 450.3 L974.1 443.0 L962.4 435.4 L951.3 427.3 L941.0 419.0 L931.6 410.3 L922.9 401.4 L915.2 392.2 L908.3 382.9 L902.5 373.4 L897.6 363.9 L893.6 354.2 L890.7 344.6 L888.9 335.0 L888.0 325.4 L888.2 316.0 L889.4 306.7 L891.7 297.5 L894.9 288.6 L899.2 280.0 L904.5 271.7 L910.7 263.7 L917.9 256.1" stroke="#111" stroke-width="1" fill="none"/>
</g>
<rect x="1183.5" y="451.5" width="7" height="7" fill="none" stroke="#fff" stroke-width="1"/>
<path d="M990.0 211.0 L1005.0 208.0 L1040.0 204.7 L1068.0 202.6 L1095.0 202.5 L1140.0 206.0 L1190.0 217.5 L1235.0 232.0 L1270.0 250.0 L1282.0 251.0 L1290.0 262.0 L1315.0 280.0 L1335.0 300.0 L1350.0 318.0 L1360.0 340.0 L1365.0 370.0 L1364.0 390.0 L1356.0 428.0 L1351.0 460.0 L1343.0 500.0 L1335.0 542.0 L1324.0 596.0 L1305.0 631.0 L1267.0 656.0 L1194.0 673.0 L1145.0 687.0 L1094.0 683.0 L1040.0 672.0 L1002.0 661.0 L966.0 637.0 L931.0 615.0 L899.0 597.0 L882.0 572.0 L866.0 545.0 L861.0 515.0 L865.0 480.0 L871.0 435.0 L877.0 390.0 L884.0 350.0 L887.8 315.8 L893.3 295.0 L901.7 277.0 L918.3 256.0 L935.0 243.6 L951.7 233.9 L971.0 223.5 L989.0 215.8ZM931.5 472.0 L945.6 469.7 L963.0 473.6 L983.4 484.6 L1000.7 502.0 L1013.3 522.4 L1021.2 544.4 L1023.6 563.3 L1019.6 587.0 L1013.3 597.2 L994.4 598.7 L974.0 591.7 L963.0 583.8 L950.4 569.6 L940.9 550.7 L923.6 528.7 L922.8 509.8 L925.2 489.4ZM1230.3 519.4 L1251.1 518.0 L1269.2 522.9 L1274.0 532.0 L1273.3 555.6 L1266.4 577.8 L1259.4 584.7 L1240.0 597.2 L1217.8 618.0 L1198.3 626.4 L1174.7 627.8 L1158.0 622.2 L1154.6 605.6 L1158.0 586.0 L1169.2 565.3 L1185.8 545.8 L1206.7 530.6ZM1085.2 311.9 L1113.3 310.4 L1137.8 313.3 L1162.2 320.0 L1176.3 327.4 L1171.9 337.8 L1155.6 345.9 L1132.6 347.8 L1107.4 342.2 L1089.6 329.6 L1085.2 315.6Z" fill="none" stroke="#111" stroke-width="1"/>
</svg>

<svg width="0" height="0" style="position:absolute">
<defs>
 <linearGradient id="gFold" x1="0" y1="0" x2="0" y2="1"><stop offset="0" stop-color="#f6dca6"/><stop offset="1" stop-color="#e2a94e"/></linearGradient>
 <linearGradient id="gGrayF" x1="0" y1="0" x2="0" y2="1"><stop offset="0" stop-color="#e6e6e6"/><stop offset="1" stop-color="#9a9a9a"/></linearGradient>
 <linearGradient id="gPurp" x1="0" y1="0" x2="1" y2="0"><stop offset="0" stop-color="#5a5a9a"/><stop offset="1" stop-color="#b0b0e8"/></linearGradient>
 <linearGradient id="gRain" x1="0" y1="0" x2="1" y2="0"><stop offset="0" stop-color="#e0007a"/><stop offset=".25" stop-color="#2040ff"/><stop offset=".5" stop-color="#00d0ff"/><stop offset=".7" stop-color="#30e030"/><stop offset="1" stop-color="#ffd000"/></linearGradient>
 <radialGradient id="gCw"><stop offset="0" stop-color="#fff"/><stop offset="1" stop-color="#fff" stop-opacity="0"/></radialGradient>
 <symbol id="dotsv" viewBox="0 0 4 22"><rect x="1" y="1" width="2" height="2" fill="#222"/><rect x="1" y="7" width="2" height="2" fill="#222"/><rect x="1" y="13" width="2" height="2" fill="#222"/><rect x="1" y="19" width="2" height="2" fill="#222"/></symbol>
 <symbol id="dd" viewBox="0 0 6 4"><path d="M0 0H6L3 3.5Z" fill="#000"/></symbol>
 <symbol id="blocks" viewBox="0 0 16 12">
  <path d="M0 7.5L4 5L8 7.5L4 10Z" fill="#3030ff"/><path d="M0 7.5V9L4 11.5V10Z" fill="#1010a0"/><path d="M8 7.5V9L4 11.5V10Z" fill="#1818c0"/>
  <path d="M8 7.5L12 5L16 7.5L12 10Z" fill="#f5a623"/><path d="M8 7.5V9L12 11.5V10Z" fill="#a86a10"/><path d="M16 7.5V9L12 11.5V10Z" fill="#c88010"/>
  <path d="M4 3L8 0.5L12 3L8 5.5Z" fill="#30e030"/><path d="M4 3V4.5L8 7V5.5Z" fill="#10a010"/><path d="M12 3V4.5L8 7V5.5Z" fill="#18b818"/>
 </symbol>
 <symbol id="folder" viewBox="0 0 22 18"><path d="M1 3Q1 1 3 1H8L10 3H19Q21 3 21 5V16Q21 17 20 17H2Q1 17 1 16Z" fill="url(#gFold)" stroke="#d49a3c" stroke-width=".6"/></symbol>
 <symbol id="folderg" viewBox="0 0 22 18"><path d="M1 3Q1 1 3 1H8L10 3H19Q21 3 21 5V16Q21 17 20 17H2Q1 17 1 16Z" fill="url(#gGrayF)" stroke="#888" stroke-width=".6"/></symbol>
 <symbol id="mpatch" viewBox="0 0 20 20"><path d="M2 6Q10 3 18 1V15Q10 15 2 19Z" fill="#6a6aaa" stroke="#333366" stroke-width=".8"/><path d="M6 5v13M10 3.8v13M14 2.5v12.7M2 10.5Q10 8 18 6M2 15Q10 12 18 10.5" stroke="#333366" stroke-width=".7" fill="none"/></symbol>
 <symbol id="arrowdl" viewBox="0 0 16 14"><path d="M15 3L11 0L5 6L3 3L1 13L11 11L8 9Z" fill="#22b022"/></symbol>
 <symbol id="arrowur" viewBox="0 0 16 14"><path d="M1 10L5 13L11 7L13 10L15 0L5 2L8 4Z" fill="#e02020"/></symbol>
 <symbol id="user" viewBox="0 0 18 24"><ellipse cx="9" cy="7" rx="5" ry="6" fill="#e6b07c"/><path d="M4 6Q4 0 9 0Q15 0 14 6Q13 3 9 3Q5 3 4 6Z" fill="#6a4320"/><path d="M0 24Q0 14 9 14Q18 14 18 24Z" fill="#18a038"/><path d="M6 14L9 19L12 14Z" fill="#eee"/></symbol>
 <symbol id="glass" viewBox="0 0 22 22"><circle cx="9" cy="9" r="7" fill="#dde0ff" stroke="#888" stroke-width="2.2"/><path d="M14 14L20 20" stroke="#8080b0" stroke-width="3" stroke-linecap="round"/></symbol>
 <symbol id="cross4" viewBox="0 0 20 22"><path d="M9 1L12 6H10.4V10H15V8.5L19.5 11L15 13.5V12H10.4V16H12L9.5 21.5L7.5 16H9V12H4.5V13.5L0.5 11L4.5 8.5V10H9V6H7Z" fill="#6c6cb0"/></symbol>
 <symbol id="arrlr" viewBox="0 0 22 12"><linearGradient id="gAr" x1="0" y1="0" x2="1" y2="0"><stop offset="0" stop-color="#b8b8f0"/><stop offset="1" stop-color="#4a4a98"/></linearGradient><path d="M0.5 6L7 1V4.6H15V1L21.5 6L15 11V7.4H7V11Z" fill="url(#gAr)"/></symbol>
 <symbol id="arrud" viewBox="0 0 12 22"><linearGradient id="gAu" x1="0" y1="0" x2="0" y2="1"><stop offset="0" stop-color="#c0c0f0"/><stop offset="1" stop-color="#4a4a98"/></linearGradient><path d="M6 0.5L11 7H7.4V15H11L6 21.5L1 15H4.6V7H1Z" fill="url(#gAu)"/></symbol>
 <symbol id="rotv" viewBox="0 0 20 22"><path d="M7.5 1.5Q1 11 7.5 20.5L10 20Q5 11 10 2.5Z" fill="#6060a8"/><path d="M12.5 1.5Q19 11 12.5 20.5L10 19.5Q15 11 10 2Z" fill="#8c8cd4"/><path d="M5 2.5L10.5 0.5L9.5 6Z" fill="#6060a8"/><path d="M15 19.5L9.5 21.5L10.5 16Z" fill="#8c8cd4"/></symbol>
 <symbol id="undo" viewBox="0 0 22 16"><path d="M21 9.5Q17 1 9 4.5L7.5 1.5L1.5 10.5L11 13L9.5 9Q16 5.5 21 9.5Z" fill="#7a7ac4" stroke="#5a5aa0" stroke-width=".5"/></symbol>
 <symbol id="hand" viewBox="0 0 20 24"><path d="M4 22Q1 16 1 12Q1 10 3 11L5 14V4Q5 2.5 6.5 2.5Q8 2.5 8 4V11V2Q8 0.5 9.5 0.5Q11 0.5 11 2V11V3Q11 1.5 12.5 1.5Q14 1.5 14 3V11V5Q14 4 15.5 4Q17 4 17 5.5V15Q17 20 14 23Z" fill="#fff" stroke="#333" stroke-width="1"/></symbol>
 <symbol id="back" viewBox="0 0 20 22"><path d="M1 11L11 1V6H19V16H11V21Z" fill="#a8a8d8" stroke="#7878b0" stroke-width="1"/></symbol>
 <symbol id="rainbow" viewBox="0 0 16 4"><rect x="0.5" y="0.5" width="15" height="3" rx="1.5" fill="url(#gRain)" stroke="#555" stroke-width=".5"/></symbol>
 <symbol id="eye" viewBox="0 0 22 12"><radialGradient id="gIris" cx=".5" cy=".45" r=".5"><stop offset="0" stop-color="#c8dcff"/><stop offset="1" stop-color="#5a88d8"/></radialGradient><path d="M1 6.5Q11 -2.5 21 6.5Q11 13.5 1 6.5Z" fill="#fff" stroke="#8a8a8a" stroke-width="1.6"/><circle cx="11" cy="6" r="4.6" fill="url(#gIris)"/><circle cx="11" cy="4.8" r="1.2" fill="#203070"/></symbol>
 <symbol id="cubeblue" viewBox="0 0 20 14"><path d="M1 6L10 1L19 6L10 11Z" fill="#4a4aff"/><path d="M1 6V9L10 14V11Z" fill="#1a1aa0"/><path d="M19 6V9L10 14V11Z" fill="#2828c8"/></symbol>
 <symbol id="cubegray" viewBox="0 0 20 14"><path d="M1 6L10 1L19 6L10 11Z" fill="#a8a8a8"/><path d="M1 6V9L10 14V11Z" fill="#555"/><path d="M19 6V9L10 14V11Z" fill="#777"/></symbol>
 <symbol id="redx" viewBox="0 0 16 16"><path d="M2 4L4 2L8 6L12 2L14 4L10 8L14 12L12 14L8 10L4 14L2 12L6 8Z" fill="#e02828" stroke="#a01010" stroke-width=".6"/></symbol>
 <symbol id="surf" viewBox="0 0 22 16"><path d="M0.8 5.6Q6 -0.5 13 1.2Q17 2.5 19.5 5.6Q21.5 8 21.6 10.5Q20 8.4 17.5 8.2Q14.5 8.5 13 15.5Z" fill="#7a7ac2" stroke="#333" stroke-width=".7" stroke-linejoin="round"/><path d="M19.5 5.6Q16 5 13 8" stroke="#444" stroke-width=".5" fill="none"/></symbol>
 <symbol id="surfw" viewBox="0 0 22 16"><path d="M0.8 5.6Q6 -0.5 13 1.2Q17 2.5 19.5 5.6Q21.5 8 21.6 10.5Q20 8.4 17.5 8.2Q14.5 8.5 13 15.5Z" fill="#f8f8f8" stroke="#333" stroke-width=".7" stroke-linejoin="round"/><path d="M19.5 5.6Q16 5 14 7.5" stroke="#555" stroke-width=".5" fill="none"/></symbol>
 <symbol id="cube3" viewBox="0 0 20 22"><path d="M10 1L19 6V16L10 21L1 16V6Z" fill="#9c9cd6" stroke="#444" stroke-width=".8"/><path d="M1 6L10 11L19 6M10 11V21" stroke="#444" stroke-width=".8" fill="none"/><path d="M10 11L19 6V16L10 21Z" fill="#c8c8ec"/></symbol>
 <symbol id="rubik" viewBox="0 0 20 20"><path d="M10 1L19 5.5V14.5L10 19L1 14.5V5.5Z" fill="#6c6cb8" stroke="#333" stroke-width=".8"/><path d="M1 5.5L10 10L19 5.5M10 10V19M4 4L13 8.5V17.5M7 2.5L16 7M1 8.5L10 13L19 8.5M1 11.5L10 16L19 11.5M16 4L7 8.5V17.5" stroke="#333" stroke-width=".6" fill="none"/></symbol>
 <symbol id="rubikw" viewBox="0 0 20 20"><path d="M10 1L19 5.5V14.5L10 19L1 14.5V5.5Z" fill="#fafafa" stroke="#555" stroke-width=".8"/><path d="M1 5.5L10 10L19 5.5M10 10V19M4 4L13 8.5V17.5M7 2.5L16 7M1 8.5L10 13L19 8.5M1 11.5L10 16L19 11.5M16 4L7 8.5V17.5" stroke="#555" stroke-width=".6" fill="none"/></symbol>
 <symbol id="plate" viewBox="0 0 20 12"><path d="M1 6L10 1L19 6L10 11Z" fill="#5858e8" stroke="#333" stroke-width=".6"/><path d="M1 6V7.5L10 12.5V11ZM19 6V7.5L10 12.5V11Z" fill="#2a2a90"/></symbol>
 <symbol id="gridflat" viewBox="0 0 20 12"><path d="M1 6L10 1L19 6L10 11Z" fill="#8a8a8a" stroke="#444" stroke-width=".7"/><path d="M5.5 3.5L14.5 8.5M14.5 3.5L5.5 8.5" stroke="#444" stroke-width=".7"/></symbol>
 <symbol id="monitor" viewBox="0 0 20 20"><rect x="1" y="1" width="18" height="13" fill="#5aa8e8" stroke="#333" stroke-width="1.2"/><path d="M8 14H12L13 18H7Z" fill="#555"/></symbol>
 <symbol id="star" viewBox="0 0 20 20"><path d="M10 1L12.6 7.2L19.3 7.6L14.2 11.9L15.9 18.5L10 14.8L4.1 18.5L5.8 11.9L0.7 7.6L7.4 7.2Z" fill="#f8c818" stroke="#b08000" stroke-width=".8"/></symbol>
 <symbol id="binoc" viewBox="0 0 20 18"><path d="M2 10Q0 16 5 17Q9 16 8 10L7 4Q5 2 3 4Z" fill="#4060c0"/><path d="M18 10Q20 16 15 17Q11 16 12 10L13 4Q15 2 17 4Z" fill="#4060c0"/><rect x="7" y="6" width="6" height="4" fill="#2a2a60"/><circle cx="5" cy="13" r="2.5" fill="#a0c0ff"/><circle cx="15" cy="13" r="2.5" fill="#a0c0ff"/></symbol>
</defs></svg>

<svg class="a" style="left:5px;top:60px" width="4" height="22"><use href="#dotsv"/></svg>
<svg class="a" style="left:0px;top:0px" width="0" height="0"><use href="#folder"/></svg>
<svg class="a" style="left:16px;top:60px" width="24" height="24"><path d="M1.5 3H10L13 6V21H1.5Z" fill="#e8e8e8" stroke="#999" stroke-width=".8"/><path d="M3 0H6V3H9V6H6V9H3V6H0V3H3Z" fill="#50c020" stroke="#2a8a10" stroke-width=".5"/></svg>
<svg class="a" style="left:22px;top:70px" width="16" height="12"><use href="#blocks"/></svg>
<svg class="a" style="left:44px;top:61px" width="22" height="18"><use href="#folder"/></svg>
<svg class="a" style="left:50px;top:70px" width="16" height="12"><use href="#blocks"/></svg>
<svg class="a" style="left:72px;top:60px" width="18" height="19"><path d="M1 2L16 0V17L1 18Z" fill="#5858a0" stroke="#38386a" stroke-width=".8"/><rect x="4" y="2.5" width="10" height="5" fill="#e8e8ff"/><rect x="5" y="11" width="7" height="6" fill="#c8c8f0"/></svg>
<svg class="a" style="left:78px;top:70px" width="16" height="12"><use href="#blocks"/></svg>
<svg class="a" style="left:100px;top:61px" width="16" height="14"><use href="#arrowdl"/></svg>
<svg class="a" style="left:109px;top:67px" width="15" height="15"><use href="#mpatch"/></svg>
<svg class="a" style="left:127px;top:70px" width="6" height="4"><use href="#dd"/></svg>
<svg class="a" style="left:138px;top:60px" width="16" height="14"><use href="#arrowur"/></svg>
<svg class="a" style="left:147px;top:67px" width="15" height="15"><use href="#mpatch"/></svg>
<svg class="a" style="left:165px;top:70px" width="6" height="4"><use href="#dd"/></svg>
<div class="a" style="left:179px;top:61px;width:1px;height:20px;background:#888"></div>
<svg class="a" style="left:193px;top:60px" width="17" height="22"><use href="#user"/></svg>
<svg class="a" style="left:218px;top:61px" width="20" height="17"><use href="#folder"/></svg>
<svg class="a" style="left:228px;top:66px" width="12" height="14"><path d="M0 5L11 0V10L0 14Z" fill="url(#gRain)"/></svg>
<svg class="a" style="left:245px;top:70px" width="6" height="4"><use href="#dd"/></svg>
<svg class="a" style="left:259px;top:60px" width="4" height="22"><use href="#dotsv"/></svg>
<svg class="a" style="left:270px;top:62px" width="20" height="20"><use href="#glass"/></svg>
<svg class="a" style="left:274px;top:66px" width="10" height="10"><path d="M5 0V10M0 5H10M2 2L8 8M8 2L2 8" stroke="#555" stroke-width=".8"/></svg>
<svg class="a" style="left:301px;top:60px" width="19" height="22"><use href="#back"/></svg>
<svg class="a" style="left:328px;top:59px" width="23" height="25"><path d="M3 21V3" stroke="#10b020" stroke-width="2"/><path d="M0 5L3 0L6 5Z" fill="#10b020"/><path d="M3 21H19" stroke="#e02020" stroke-width="2"/><path d="M17 18L22 21L17 24Z" fill="#e02020"/><text x="9" y="10" font-size="8" font-family="Liberation Sans" font-weight="bold" fill="#444">Y</text><text x="15" y="17" font-size="8" font-family="Liberation Sans" font-weight="bold" fill="#444">X</text></svg>
<svg class="a" style="left:356px;top:59px" width="23" height="25"><path d="M3 4V19" stroke="#10b020" stroke-width="2"/><path d="M0 18L3 23L6 18Z" fill="#10b020"/><path d="M3 4H19" stroke="#e02020" stroke-width="2"/><path d="M17 1L22 4L17 7Z" fill="#e02020"/><text x="8" y="22" font-size="8" font-family="Liberation Sans" font-weight="bold" fill="#444">Y</text><text x="15" y="14" font-size="8" font-family="Liberation Sans" font-weight="bold" fill="#444">X</text></svg>
<svg class="a" style="left:384px;top:59px" width="23" height="25"><path d="M3 21V3" stroke="#2030e0" stroke-width="2"/><path d="M0 5L3 0L6 5Z" fill="#2030e0"/><path d="M3 21H19" stroke="#e02020" stroke-width="2"/><path d="M17 18L22 21L17 24Z" fill="#e02020"/><text x="9" y="10" font-size="8" font-family="Liberation Sans" font-weight="bold" fill="#444">Z</text><text x="15" y="17" font-size="8" font-family="Liberation Sans" font-weight="bold" fill="#444">X</text></svg>
<svg class="a" style="left:412px;top:59px" width="23" height="25"><path d="M19 21V3" stroke="#2030e0" stroke-width="2"/><path d="M16 5L19 0L22 5Z" fill="#2030e0"/><path d="M19 21H4" stroke="#e02020" stroke-width="2"/><path d="M5 18L0 21L5 24Z" fill="#e02020"/><text x="9" y="10" font-size="8" font-family="Liberation Sans" font-weight="bold" fill="#444">Z</text><text x="1" y="17" font-size="8" font-family="Liberation Sans" font-weight="bold" fill="#444">X</text></svg>
<svg class="a" style="left:440px;top:59px" width="23" height="25"><path d="M3 21V3" stroke="#2030e0" stroke-width="2"/><path d="M0 5L3 0L6 5Z" fill="#2030e0"/><path d="M3 21H19" stroke="#10b020" stroke-width="2"/><path d="M17 18L22 21L17 24Z" fill="#10b020"/><text x="9" y="10" font-size="8" font-family="Liberation Sans" font-weight="bold" fill="#444">Z</text><text x="15" y="17" font-size="8" font-family="Liberation Sans" font-weight="bold" fill="#444">Y</text></svg>
<svg class="a" style="left:468px;top:59px" width="23" height="25"><path d="M19 21V3" stroke="#2030e0" stroke-width="2"/><path d="M16 5L19 0L22 5Z" fill="#2030e0"/><path d="M19 21H4" stroke="#10b020" stroke-width="2"/><path d="M5 18L0 21L5 24Z" fill="#10b020"/><text x="9" y="10" font-size="8" font-family="Liberation Sans" font-weight="bold" fill="#444">Z</text><text x="1" y="17" font-size="8" font-family="Liberation Sans" font-weight="bold" fill="#444">Y</text></svg>
<svg class="a" style="left:496px;top:59px" width="23" height="25"><path d="M11 22V10" stroke="#2030e0" stroke-width="1.6"/><path d="M8.5 12L11 7L13.5 12Z" fill="#2030e0"/><path d="M11 22L2 17" stroke="#10b020" stroke-width="1.6"/><path d="M11 22L21 17" stroke="#e02020" stroke-width="1.6"/><text x="1" y="13" font-size="7" font-family="Liberation Sans" font-weight="bold" fill="#444">Y</text><text x="8" y="7" font-size="7" font-family="Liberation Sans" font-weight="bold" fill="#444">Z</text><text x="16" y="12" font-size="7" font-family="Liberation Sans" font-weight="bold" fill="#444">X</text></svg>
<svg class="a" style="left:524px;top:60px" width="22" height="22"><path d="M1 1L15 3V14L1 15Z" fill="#4a90d8" stroke="#335" stroke-width=".8"/><path d="M12 19Q18 20 20 14L21 17L16 20Z" fill="#e02020"/><path d="M14 16L12 20L18 20" fill="#e02020"/></svg>
<svg class="a" style="left:555px;top:60px" width="4" height="22"><use href="#dotsv"/></svg>
<svg class="a" style="left:567px;top:62px" width="20" height="20"><use href="#glass"/></svg>
<svg class="a" style="left:565px;top:60px" width="24" height="24"><path d="M13 2H18" stroke="#222" stroke-width="1.6"/><path d="M1 19.5H6.5M3.75 17V22.5" stroke="#222" stroke-width="1.6"/></svg>
<svg class="a" style="left:596px;top:62px" width="20" height="20"><use href="#glass"/></svg>
<svg class="a" style="left:593px;top:59px" width="24" height="24"><circle cx="12" cy="11" r="10" fill="none" stroke="#444" stroke-width=".8" stroke-dasharray="1 1.5"/></svg>
<svg class="a" style="left:623px;top:60px" width="19" height="22"><use href="#cross4"/></svg>
<svg class="a" style="left:651px;top:60px" width="20" height="23"><use href="#hand"/></svg>
<svg class="a" style="left:678px;top:65px" width="22" height="12"><use href="#arrlr"/></svg>
<svg class="a" style="left:711px;top:60px" width="12" height="22"><use href="#arrud"/></svg>
<svg class="a" style="left:736px;top:60px" width="19" height="22"><use href="#rotv"/></svg>
<svg class="a" style="left:766px;top:60px" width="4" height="22"><use href="#dotsv"/></svg>
<svg class="a" style="left:777px;top:62px" width="22" height="16"><use href="#undo"/></svg>
<svg class="a" style="left:804px;top:70px" width="6" height="4"><use href="#dd"/></svg>
<svg class="a" style="left:815px;top:62px" width="22" height="16" style="opacity:.35"><g opacity=".3"><use href="#undo" transform="translate(22,0) scale(-1,1)"/></g></svg>
<svg class="a" style="left:842px;top:70px" width="6" height="4"><path d="M0 0H6L3 3.5Z" fill="#bbb"/></svg>
<div class="a" style="left:4px;top:93px;width:58px;height:26px;background:#f0f0f0;border-top:1px solid #fff;border-left:1px solid #fff;border-right:2px solid #777;border-top-right-radius:2px"></div>
<div class="t" style="left:12px;top:102.5px;font-size:14px;font-weight:normal;color:#000">Utility</div>
<div class="a" style="left:63px;top:93px;width:57px;height:26px;background:#f0f0f0;border-top:1px solid #fff;border-left:1px solid #fff;border-right:2px solid #777;border-top-right-radius:2px"></div>
<div class="t" style="left:73px;top:102.5px;font-size:14px;font-weight:normal;color:#000">Mask</div>
<div class="a" style="left:121px;top:92px;width:62px;height:28px;background:#f0f0f0;border-top:1px solid #fff;border-left:1px solid #fff;border-right:2px solid #777;border-top-right-radius:2px"></div>
<div class="t" style="left:131px;top:101px;font-size:15px;letter-spacing:.3px;font-weight:bold;color:#000">Model</div>
<div class="a" style="left:184px;top:93px;width:90px;height:26px;background:#f0f0f0;border-top:1px solid #fff;border-left:1px solid #fff;border-right:2px solid #777;border-top-right-radius:2px"></div>
<div class="t" style="left:194px;top:102.5px;font-size:14px;font-weight:normal;color:#000">Connector</div>
<svg class="a" style="left:396px;top:88px" width="8" height="8"><path d="M.5 .5L7.5 7.5M7.5 .5L.5 7.5" stroke="#000" stroke-width="1.1"/></svg>
<div class="a" style="left:6px;top:122px;width:28px;height:27px;background:#fdc68a;border:1px solid #e8a860"></div>
<svg class="a" style="left:9px;top:125px" width="19" height="17"><path d="M1 2.5Q1 1 2.5 1H8L9.5 2.5H16.5Q18 2.5 18 4V14.5Q18 16 16.5 16H2.5Q1 16 1 14.5Z" fill="url(#gGrayF)" stroke="#777" stroke-width=".7"/></svg>
<svg class="a" style="left:37px;top:125px" width="19" height="17"><path d="M1 2.5Q1 1 2.5 1H8L9.5 2.5H16.5Q18 2.5 18 4V14.5Q18 16 16.5 16H2.5Q1 16 1 14.5Z" fill="url(#gGrayF)" stroke="#777" stroke-width=".7"/></svg>
<svg class="a" style="left:65px;top:125px" width="19" height="17"><path d="M1 2.5Q1 1 2.5 1H8L9.5 2.5H16.5Q18 2.5 18 4V14.5Q18 16 16.5 16H2.5Q1 16 1 14.5Z" fill="url(#gGrayF)" stroke="#777" stroke-width=".7"/></svg>
<svg class="a" style="left:93px;top:125px" width="19" height="17"><path d="M1 2.5Q1 1 2.5 1H8L9.5 2.5H16.5Q18 2.5 18 4V14.5Q18 16 16.5 16H2.5Q1 16 1 14.5Z" fill="url(#gGrayF)" stroke="#777" stroke-width=".7"/></svg>
<svg class="a" style="left:121px;top:125px" width="19" height="17"><path d="M1 2.5Q1 1 2.5 1H8L9.5 2.5H16.5Q18 2.5 18 4V14.5Q18 16 16.5 16H2.5Q1 16 1 14.5Z" fill="url(#gGrayF)" stroke="#777" stroke-width=".7"/></svg>
<svg class="a" style="left:149px;top:125px" width="19" height="17"><path d="M1 2.5Q1 1 2.5 1H8L9.5 2.5H16.5Q18 2.5 18 4V14.5Q18 16 16.5 16H2.5Q1 16 1 14.5Z" fill="url(#gGrayF)" stroke="#777" stroke-width=".7"/></svg>
<svg class="a" style="left:177px;top:125px" width="19" height="17"><path d="M1 2.5Q1 1 2.5 1H8L9.5 2.5H16.5Q18 2.5 18 4V14.5Q18 16 16.5 16H2.5Q1 16 1 14.5Z" fill="url(#gGrayF)" stroke="#777" stroke-width=".7"/></svg>
<svg class="a" style="left:205px;top:125px" width="19" height="17"><path d="M1 2.5Q1 1 2.5 1H8L9.5 2.5H16.5Q18 2.5 18 4V14.5Q18 16 16.5 16H2.5Q1 16 1 14.5Z" fill="url(#gGrayF)" stroke="#777" stroke-width=".7"/></svg>
<svg class="a" style="left:40px;top:130px" width="20" height="18"><path d="M5 8L13 3M5 8H13M5 8L13 13" stroke="#333" stroke-width="1"/><circle cx="5" cy="8" r="3.5" fill="#2a7ae8"/><circle cx="14" cy="3" r="2.5" fill="#2a7ae8"/><circle cx="16" cy="8" r="2.5" fill="#2a7ae8"/><circle cx="14" cy="14" r="2.5" fill="#2a7ae8"/></svg>
<svg class="a" style="left:69px;top:133px" width="17" height="13"><use href="#cubeblue"/></svg>
<svg class="a" style="left:99px;top:131px" width="15" height="16"><path d="M1 15V2M1 15H14" stroke="#111" stroke-width="1"/><path d="M1 5Q6 -1 13 4" stroke="#e02020" stroke-width="1.6" fill="none"/><path d="M6 5H10L8 9L10 13H6L8 9Z" fill="#aaa" stroke="#666" stroke-width=".5"/></svg>
<svg class="a" style="left:120px;top:128px" width="24" height="21"><text x="4" y="8" font-size="8" font-weight="bold" font-family="Liberation Sans" fill="#000">t</text><path d="M3 10L5 13M1 19L3 16" stroke="#c00" stroke-width="1"/></svg>
<svg class="a" style="left:126px;top:133px" width="17" height="13"><use href="#cubegray"/></svg>
<svg class="a" style="left:151px;top:131px" width="22" height="16"><path d="M2 14L6 5Q12 1 18 4L21 10L14 14Z" fill="none" stroke="#6a6ad0" stroke-width="1"/><path d="M6 5L10 12M12 3L14 14M18 4L10 12M2 14L18 8" stroke="#6a6ad0" stroke-width=".8"/></svg>
<svg class="a" style="left:178px;top:133px" width="22" height="16"><use href="#blocks"/></svg>
<svg class="a" style="left:212px;top:131px" width="14" height="16"><path d="M1 1H13V4L9 6V10L13 12V15H1V12L5 10V6L1 4Z" fill="#8a8080" stroke="#5a5050" stroke-width=".6"/></svg>
<svg class="a" style="left:358px;top:155px" width="14" height="14"><circle cx="5.5" cy="5.5" r="4.3" fill="none" stroke="#333" stroke-width="1.3"/><path d="M8.5 8.5L12.5 12.5" stroke="#333" stroke-width="1.6"/></svg>
<div class="a" style="left:369px;top:154px;width:12px;height:16px;background:#f0f0f0"></div>
<svg class="a" style="left:372px;top:159px" width="7" height="5"><path d="M.5 .5L3.5 3.5L6.5 .5" stroke="#444" stroke-width="1.2" fill="none"/></svg>
<svg class="a" style="left:387px;top:156px" width="9" height="10"><path d="M1 1L4.5 4L8 1M1 5L4.5 8L8 5" stroke="#333" stroke-width="1.2" fill="none"/></svg>
<svg class="a" style="left:10px;top:178px" width="22" height="22"><path d="M1 4L8 0V9L1 13Z" fill="#7878b8" stroke="#444" stroke-width=".6"/><path d="M1 8.5L8 4.5M4.5 2V11" stroke="#444" stroke-width=".6"/><path d="M4 13Q4 8 11 9Q16 10 20 5V16Q16 21 11 19Q6 18 5 21Z" fill="#5c90e0" stroke="#2a5aa8" stroke-width=".7"/></svg>
<svg class="a" style="left:36px;top:189px" width="6" height="4"><use href="#dd"/></svg>
<svg class="a" style="left:46px;top:178px" width="16" height="9"><use href="#eye"/></svg>
<svg class="a" style="left:57px;top:186px" width="12" height="15"><path d="M1 0V14M1 3H3M1 11H3" stroke="#888" stroke-width=".8"/><rect x="3.5" y=".5" width="6" height="6" fill="#fff" stroke="#999"/><rect x="3.5" y="8" width="6" height="6" fill="#fff" stroke="#999"/><path d="M5 3L6.5 5L8.5 2M5 10.5L6.5 12.5L8.5 9.5" stroke="#1a3aff" stroke-width="1.2" fill="none"/></svg>
<svg class="a" style="left:74px;top:178px" width="16" height="9"><use href="#eye"/></svg>
<svg class="a" style="left:85px;top:186px" width="12" height="15"><path d="M1 0V14M1 3H3M1 11H3" stroke="#888" stroke-width=".8"/><rect x="3.5" y=".5" width="6" height="6" fill="#fff" stroke="#999"/><rect x="3.5" y="8" width="6" height="6" fill="#fff" stroke="#999"/></svg>
<svg class="a" style="left:102px;top:178px" width="16" height="9"><use href="#eye"/></svg>
<svg class="a" style="left:109px;top:187px" width="18" height="15"><rect x=".5" y="2" width="6" height="6" fill="#fff" stroke="#999"/><path d="M2 4.5L3.5 6.5L5.5 3" stroke="#1a3aff" stroke-width="1.2" fill="none"/><rect x="10" y="8" width="6" height="6" fill="#fff" stroke="#999"/><path d="M9 1Q13 1 14 5M5 13Q7 10 9 12" stroke="#777" stroke-width="1" fill="none"/></svg>
<svg class="a" style="left:227px;top:183px" width="15" height="12"><use href="#cubeblue"/></svg>
<svg class="a" style="left:244px;top:189px" width="6" height="4"><use href="#dd"/></svg>
<svg class="a" style="left:256px;top:178px" width="22" height="22"><path d="M1 4L8 0V9L1 13Z" fill="#7878b8" stroke="#444" stroke-width=".6"/><path d="M1 8.5L8 4.5M4.5 2V11" stroke="#444" stroke-width=".6"/><path d="M4 13Q4 8 11 9Q16 10 20 5V16Q16 21 11 19Q6 18 5 21Z" fill="#5c90e0" stroke="#2a5aa8" stroke-width=".7"/></svg>
<svg class="a" style="left:282px;top:189px" width="6" height="4"><use href="#dd"/></svg>
<svg class="a" style="left:297px;top:180px" width="12" height="19"><path d="M1 1V15L4.5 11.5L7.5 18L9.5 17L6.5 10.5H11Z" fill="#fff" stroke="#222" stroke-width="1"/></svg>
<svg class="a" style="left:319px;top:180px" width="22" height="18"><rect x="1" y="9" width="19" height="7" fill="#f4f090" stroke="#8ad" stroke-width=".8" stroke-dasharray="1 1"/><path d="M13 1L17 6M15 1L18 5" stroke="#888" stroke-width="1"/></svg>
<svg class="a" style="left:349px;top:178px" width="22" height="12"><use href="#eye"/></svg>
<div class="t" style="left:350px;top:190px;font-size:10px;font-weight:bold;color:#333">+/&#8211;</div>
<svg class="a" style="left:377px;top:178px" width="22" height="12"><use href="#eye"/></svg>
<div class="t" style="left:390px;top:190px;font-size:10px;font-weight:bold;color:#333">1</div>
<div class="a" style="left:189px;top:211px;width:1px;height:20px;background:#c8d0d8"></div>
<div class="a" style="left:214px;top:211px;width:1px;height:20px;background:#c8d0d8"></div>
<div class="a" style="left:239px;top:211px;width:1px;height:20px;background:#c8d0d8"></div>
<div class="a" style="left:286px;top:211px;width:1px;height:20px;background:#c8d0d8"></div>
<div class="a" style="left:218px;top:214px;width:13px;height:13px;border-radius:50%;background:conic-gradient(#f00,#ff0,#0f0,#0ff,#00f,#f0f,#f00)"></div>
<svg class="a" style="left:10px;top:236px" width="40" height="80"><path d="M3.5 6V76M4 6H20M4 29H20M4 75H20M43 52H60" stroke="#888" stroke-width="1" stroke-dasharray="1 1" fill="none"/><path d="M2 3L5 6L2 9Z" fill="#888"/><path d="M1 28H7L4 31Z" fill="#000"/><path d="M2 72L5 75L2 78Z" fill="#888"/></svg>
<svg class="a" style="left:32px;top:282px" width="20" height="14"><path d="M1 0V6H18" stroke="#888" stroke-width="1" stroke-dasharray="1 1" fill="none"/></svg>
<svg class="a" style="left:24px;top:234px" width="16" height="14"><use href="#folder"/></svg>
<svg class="a" style="left:27px;top:240px" width="14" height="10"><use href="#blocks"/></svg>
<svg class="a" style="left:24px;top:257px" width="16" height="14"><use href="#folder"/></svg>
<svg class="a" style="left:28px;top:264px" width="13" height="10"><use href="#cubeblue"/></svg>
<svg class="a" style="left:24px;top:303px" width="16" height="14"><use href="#folder"/></svg>
<svg class="a" style="left:27px;top:308px" width="14" height="13"><rect x="3.5" y=".5" width="10" height="8" fill="#fff" stroke="#222"/><path d="M5.5 3H11.5M5.5 5.5H11.5" stroke="#222"/><path d="M4 9L1 12" stroke="#222" stroke-width="1.2"/></svg>
<svg class="a" style="left:46px;top:280px" width="36" height="18"><path d="M2 4Q8 1 14 1V13Q8 13 2 16Z" fill="#c0d0f0" stroke="#8aa0c8" stroke-width=".6"/><rect x="17.5" y="2.5" width="11" height="11" fill="#5858a0" stroke="#222" stroke-width="1"/><path d="M23 2.5V13.5M17.5 8H28.5" stroke="#222" stroke-width="1"/></svg>
<svg class="a" style="left:388px;top:680px" width="9" height="10"><path d="M1 1L4.5 4L8 1M1 5L4.5 8L8 5" stroke="#333" stroke-width="1.2" fill="none"/></svg>
<svg class="a" style="left:431px;top:97px" width="22" height="4"><rect x="1" y="1" width="2" height="2" fill="#222"/><rect x="7" y="1" width="2" height="2" fill="#222"/><rect x="13" y="1" width="2" height="2" fill="#222"/><rect x="19" y="1" width="2" height="2" fill="#222"/></svg>
<svg class="a" style="left:420px;top:99px" width="40" height="34"><path d="M13.00 16.00L14.33 14.78L15.67 13.71L17.00 12.90L18.33 12.38L18.33 16.38L17.00 16.90L15.67 17.71L14.33 18.78L13.00 20.00Z" fill="#6e6eb8" stroke="#2a2a60" stroke-width=".6"/><path d="M18.33 12.38L19.67 12.12L21.00 12.00L22.33 11.88L23.67 11.62L23.67 15.62L22.33 15.88L21.00 16.00L19.67 16.12L18.33 16.38Z" fill="#6e6eb8" stroke="#2a2a60" stroke-width=".6"/><path d="M23.67 11.62L25.00 11.10L26.33 10.29L27.67 9.22L29.00 8.00L29.00 12.00L27.67 13.22L26.33 14.29L25.00 15.10L23.67 15.62Z" fill="#8a8ad0" stroke="#2a2a60" stroke-width=".6"/><path d="M13.00 20.00L14.33 18.78L15.67 17.71L17.00 16.90L18.33 16.38L18.33 20.38L17.00 20.90L15.67 21.71L14.33 22.78L13.00 24.00Z" fill="#fdfdfd" stroke="#888" stroke-width=".6"/><path d="M18.33 16.38L19.67 16.12L21.00 16.00L22.33 15.88L23.67 15.62L23.67 19.62L22.33 19.88L21.00 20.00L19.67 20.12L18.33 20.38Z" fill="#fdfdfd" stroke="#888" stroke-width=".6"/><path d="M23.67 15.62L25.00 15.10L26.33 14.29L27.67 13.22L29.00 12.00L29.00 16.00L27.67 17.22L26.33 18.29L25.00 19.10L23.67 19.62Z" fill="#fdfdfd" stroke="#888" stroke-width=".6"/><path d="M13.00 24.00L14.33 22.78L15.67 21.71L17.00 20.90L18.33 20.38L18.33 24.38L17.00 24.90L15.67 25.71L14.33 26.78L13.00 28.00Z" fill="#fdfdfd" stroke="#888" stroke-width=".6"/><path d="M18.33 20.38L19.67 20.12L21.00 20.00L22.33 19.88L23.67 19.62L23.67 23.62L22.33 23.88L21.00 24.00L19.67 24.12L18.33 24.38Z" fill="#fdfdfd" stroke="#888" stroke-width=".6"/><path d="M23.67 19.62L25.00 19.10L26.33 18.29L27.67 17.22L29.00 16.00L29.00 20.00L27.67 21.22L26.33 22.29L25.00 23.10L23.67 23.62Z" fill="#fdfdfd" stroke="#888" stroke-width=".6"/><rect x="11.5" y="16.5" width="14" height="14" fill="none" stroke="#f02010" stroke-width="1.3"/></svg>
<svg class="a" style="left:420px;top:127px" width="40" height="34"><path d="M13.00 16.00L14.33 14.78L15.67 13.71L17.00 12.90L18.33 12.38L18.33 16.38L17.00 16.90L15.67 17.71L14.33 18.78L13.00 20.00Z" fill="#6e6eb8" stroke="#2a2a60" stroke-width=".6"/><path d="M18.33 12.38L19.67 12.12L21.00 12.00L22.33 11.88L23.67 11.62L23.67 15.62L22.33 15.88L21.00 16.00L19.67 16.12L18.33 16.38Z" fill="#6e6eb8" stroke="#2a2a60" stroke-width=".6"/><path d="M23.67 11.62L25.00 11.10L26.33 10.29L27.67 9.22L29.00 8.00L29.00 12.00L27.67 13.22L26.33 14.29L25.00 15.10L23.67 15.62Z" fill="#fdfdfd" stroke="#888" stroke-width=".6"/><path d="M13.00 20.00L14.33 18.78L15.67 17.71L17.00 16.90L18.33 16.38L18.33 20.38L17.00 20.90L15.67 21.71L14.33 22.78L13.00 24.00Z" fill="#6e6eb8" stroke="#2a2a60" stroke-width=".6"/><path d="M18.33 16.38L19.67 16.12L21.00 16.00L22.33 15.88L23.67 15.62L23.67 19.62L22.33 19.88L21.00 20.00L19.67 20.12L18.33 20.38Z" fill="#6e6eb8" stroke="#2a2a60" stroke-width=".6"/><path d="M23.67 15.62L25.00 15.10L26.33 14.29L27.67 13.22L29.00 12.00L29.00 16.00L27.67 17.22L26.33 18.29L25.00 19.10L23.67 19.62Z" fill="#fdfdfd" stroke="#888" stroke-width=".6"/><path d="M13.00 24.00L14.33 22.78L15.67 21.71L17.00 20.90L18.33 20.38L18.33 24.38L17.00 24.90L15.67 25.71L14.33 26.78L13.00 28.00Z" fill="#fdfdfd" stroke="#888" stroke-width=".6"/><path d="M18.33 20.38L19.67 20.12L21.00 20.00L22.33 19.88L23.67 19.62L23.67 23.62L22.33 23.88L21.00 24.00L19.67 24.12L18.33 24.38Z" fill="#fdfdfd" stroke="#888" stroke-width=".6"/><path d="M23.67 19.62L25.00 19.10L26.33 18.29L27.67 17.22L29.00 16.00L29.00 20.00L27.67 21.22L26.33 22.29L25.00 23.10L23.67 23.62Z" fill="#fdfdfd" stroke="#888" stroke-width=".6"/><path d="M23 29Q30 30 32 22L34 27L27 31Z" fill="#e81010"/><path d="M22 28L28 25L27 32Z" fill="#e81010"/></svg>
<svg class="a" style="left:420px;top:155px" width="40" height="34"><path d="M13.00 16.00L14.33 14.78L15.67 13.71L17.00 12.90L18.33 12.38L18.33 16.38L17.00 16.90L15.67 17.71L14.33 18.78L13.00 20.00Z" fill="#6e6eb8" stroke="#2a2a60" stroke-width=".6"/><path d="M18.33 12.38L19.67 12.12L21.00 12.00L22.33 11.88L23.67 11.62L23.67 15.62L22.33 15.88L21.00 16.00L19.67 16.12L18.33 16.38Z" fill="#6e6eb8" stroke="#2a2a60" stroke-width=".6"/><path d="M23.67 11.62L25.00 11.10L26.33 10.29L27.67 9.22L29.00 8.00L29.00 12.00L27.67 13.22L26.33 14.29L25.00 15.10L23.67 15.62Z" fill="#8a8ad0" stroke="#2a2a60" stroke-width=".6"/><path d="M13.00 20.00L14.33 18.78L15.67 17.71L17.00 16.90L18.33 16.38L18.33 20.38L17.00 20.90L15.67 21.71L14.33 22.78L13.00 24.00Z" fill="#6e6eb8" stroke="#2a2a60" stroke-width=".6"/><path d="M18.33 16.38L19.67 16.12L21.00 16.00L22.33 15.88L23.67 15.62L23.67 19.62L22.33 19.88L21.00 20.00L19.67 20.12L18.33 20.38Z" fill="#6e6eb8" stroke="#2a2a60" stroke-width=".6"/><path d="M23.67 15.62L25.00 15.10L26.33 14.29L27.67 13.22L29.00 12.00L29.00 16.00L27.67 17.22L26.33 18.29L25.00 19.10L23.67 19.62Z" fill="#fdfdfd" stroke="#888" stroke-width=".6"/><path d="M13.00 24.00L14.33 22.78L15.67 21.71L17.00 20.90L18.33 20.38L18.33 24.38L17.00 24.90L15.67 25.71L14.33 26.78L13.00 28.00Z" fill="#fdfdfd" stroke="#888" stroke-width=".6"/><path d="M18.33 20.38L19.67 20.12L21.00 20.00L22.33 19.88L23.67 19.62L23.67 23.62L22.33 23.88L21.00 24.00L19.67 24.12L18.33 24.38Z" fill="#fdfdfd" stroke="#888" stroke-width=".6"/><path d="M23.67 19.62L25.00 19.10L26.33 18.29L27.67 17.22L29.00 16.00L29.00 20.00L27.67 21.22L26.33 22.29L25.00 23.10L23.67 23.62Z" fill="#fdfdfd" stroke="#888" stroke-width=".6"/></svg>
<svg class="a" style="left:420px;top:183px" width="40" height="34"><path d="M13.00 16.00L14.33 14.78L15.67 13.71L17.00 12.90L18.33 12.38L18.33 16.38L17.00 16.90L15.67 17.71L14.33 18.78L13.00 20.00Z" fill="#6e6eb8" stroke="#2a2a60" stroke-width=".6"/><path d="M18.33 12.38L19.67 12.12L21.00 12.00L22.33 11.88L23.67 11.62L23.67 15.62L22.33 15.88L21.00 16.00L19.67 16.12L18.33 16.38Z" fill="#6e6eb8" stroke="#2a2a60" stroke-width=".6"/><path d="M23.67 11.62L25.00 11.10L26.33 10.29L27.67 9.22L29.00 8.00L29.00 12.00L27.67 13.22L26.33 14.29L25.00 15.10L23.67 15.62Z" fill="#8a8ad0" stroke="#2a2a60" stroke-width=".6"/><path d="M13.00 20.00L14.33 18.78L15.67 17.71L17.00 16.90L18.33 16.38L18.33 20.38L17.00 20.90L15.67 21.71L14.33 22.78L13.00 24.00Z" fill="#6e6eb8" stroke="#2a2a60" stroke-width=".6"/><path d="M18.33 16.38L19.67 16.12L21.00 16.00L22.33 15.88L23.67 15.62L23.67 19.62L22.33 19.88L21.00 20.00L19.67 20.12L18.33 20.38Z" fill="#6e6eb8" stroke="#2a2a60" stroke-width=".6"/><path d="M23.67 15.62L25.00 15.10L26.33 14.29L27.67 13.22L29.00 12.00L29.00 16.00L27.67 17.22L26.33 18.29L25.00 19.10L23.67 19.62Z" fill="#8a8ad0" stroke="#2a2a60" stroke-width=".6"/><path d="M13.00 24.00L14.33 22.78L15.67 21.71L17.00 20.90L18.33 20.38L18.33 24.38L17.00 24.90L15.67 25.71L14.33 26.78L13.00 28.00Z" fill="#6e6eb8" stroke="#2a2a60" stroke-width=".6"/><path d="M18.33 20.38L19.67 20.12L21.00 20.00L22.33 19.88L23.67 19.62L23.67 23.62L22.33 23.88L21.00 24.00L19.67 24.12L18.33 24.38Z" fill="#6e6eb8" stroke="#2a2a60" stroke-width=".6"/><path d="M23.67 19.62L25.00 19.10L26.33 18.29L27.67 17.22L29.00 16.00L29.00 20.00L27.67 21.22L26.33 22.29L25.00 23.10L23.67 23.62Z" fill="#8a8ad0" stroke="#2a2a60" stroke-width=".6"/></svg>
<svg class="a" style="left:420px;top:212px" width="40" height="34"><path d="M13.00 16.00L14.33 14.78L15.67 13.71L17.00 12.90L18.33 12.38L18.33 16.38L17.00 16.90L15.67 17.71L14.33 18.78L13.00 20.00Z" fill="#fdfdfd" stroke="#888" stroke-width=".6"/><path d="M18.33 12.38L19.67 12.12L21.00 12.00L22.33 11.88L23.67 11.62L23.67 15.62L22.33 15.88L21.00 16.00L19.67 16.12L18.33 16.38Z" fill="#fdfdfd" stroke="#888" stroke-width=".6"/><path d="M23.67 11.62L25.00 11.10L26.33 10.29L27.67 9.22L29.00 8.00L29.00 12.00L27.67 13.22L26.33 14.29L25.00 15.10L23.67 15.62Z" fill="#fdfdfd" stroke="#888" stroke-width=".6"/><path d="M13.00 20.00L14.33 18.78L15.67 17.71L17.00 16.90L18.33 16.38L18.33 20.38L17.00 20.90L15.67 21.71L14.33 22.78L13.00 24.00Z" fill="#6e6eb8" stroke="#2a2a60" stroke-width=".6"/><path d="M18.33 16.38L19.67 16.12L21.00 16.00L22.33 15.88L23.67 15.62L23.67 19.62L22.33 19.88L21.00 20.00L19.67 20.12L18.33 20.38Z" fill="#fdfdfd" stroke="#888" stroke-width=".6"/><path d="M23.67 15.62L25.00 15.10L26.33 14.29L27.67 13.22L29.00 12.00L29.00 16.00L27.67 17.22L26.33 18.29L25.00 19.10L23.67 19.62Z" fill="#fdfdfd" stroke="#888" stroke-width=".6"/><path d="M13.00 24.00L14.33 22.78L15.67 21.71L17.00 20.90L18.33 20.38L18.33 24.38L17.00 24.90L15.67 25.71L14.33 26.78L13.00 28.00Z" fill="#6e6eb8" stroke="#2a2a60" stroke-width=".6"/><path d="M18.33 20.38L19.67 20.12L21.00 20.00L22.33 19.88L23.67 19.62L23.67 23.62L22.33 23.88L21.00 24.00L19.67 24.12L18.33 24.38Z" fill="#6e6eb8" stroke="#2a2a60" stroke-width=".6"/><path d="M23.67 19.62L25.00 19.10L26.33 18.29L27.67 17.22L29.00 16.00L29.00 20.00L27.67 21.22L26.33 22.29L25.00 23.10L23.67 23.62Z" fill="#fdfdfd" stroke="#888" stroke-width=".6"/><rect x="11.5" y="20.5" width="14" height="13" fill="none" stroke="#f02010" stroke-width="1.3"/></svg>
<svg class="a" style="left:420px;top:240px" width="40" height="34"><circle cx="21" cy="18" r="9.5" fill="none" stroke="#f04030" stroke-width="1.3"/><path d="M17.00 14.00L18.00 13.12L19.00 12.38L20.00 11.90L21.00 11.71L21.00 15.71L20.00 15.90L19.00 16.38L18.00 17.12L17.00 18.00Z" fill="#6e6eb8" stroke="#2a2a60" stroke-width=".6"/><path d="M21.00 11.71L22.00 11.78L23.00 12.00L24.00 12.22L25.00 12.29L25.00 16.29L24.00 16.22L23.00 16.00L22.00 15.78L21.00 15.71Z" fill="#6e6eb8" stroke="#2a2a60" stroke-width=".6"/><path d="M25.00 12.29L26.00 12.10L27.00 11.62L28.00 10.88L29.00 10.00L29.00 14.00L28.00 14.88L27.00 15.62L26.00 16.10L25.00 16.29Z" fill="#8a8ad0" stroke="#2a2a60" stroke-width=".6"/><path d="M17.00 18.00L18.00 17.12L19.00 16.38L20.00 15.90L21.00 15.71L21.00 19.71L20.00 19.90L19.00 20.38L18.00 21.12L17.00 22.00Z" fill="#6e6eb8" stroke="#2a2a60" stroke-width=".6"/><path d="M21.00 15.71L22.00 15.78L23.00 16.00L24.00 16.22L25.00 16.29L25.00 20.29L24.00 20.22L23.00 20.00L22.00 19.78L21.00 19.71Z" fill="#6e6eb8" stroke="#2a2a60" stroke-width=".6"/><path d="M25.00 16.29L26.00 16.10L27.00 15.62L28.00 14.88L29.00 14.00L29.00 18.00L28.00 18.88L27.00 19.62L26.00 20.10L25.00 20.29Z" fill="#8a8ad0" stroke="#2a2a60" stroke-width=".6"/><path d="M17.00 22.00L18.00 21.12L19.00 20.38L20.00 19.90L21.00 19.71L21.00 23.71L20.00 23.90L19.00 24.38L18.00 25.12L17.00 26.00Z" fill="#6e6eb8" stroke="#2a2a60" stroke-width=".6"/><path d="M21.00 19.71L22.00 19.78L23.00 20.00L24.00 20.22L25.00 20.29L25.00 24.29L24.00 24.22L23.00 24.00L22.00 23.78L21.00 23.71Z" fill="#6e6eb8" stroke="#2a2a60" stroke-width=".6"/><path d="M25.00 20.29L26.00 20.10L27.00 19.62L28.00 18.88L29.00 18.00L29.00 22.00L28.00 22.88L27.00 23.62L26.00 24.10L25.00 24.29Z" fill="#8a8ad0" stroke="#2a2a60" stroke-width=".6"/></svg>
<svg class="a" style="left:431px;top:278px" width="20" height="17"><use href="#binoc"/></svg>
<svg class="a" style="left:432px;top:304px" width="10" height="10"><circle cx="5" cy="5" r="4.5" fill="#2a4ad0"/><rect x="4.3" y="4" width="1.5" height="4" fill="#fff"/><rect x="4.3" y="2" width="1.5" height="1.3" fill="#fff"/></svg>
<div class="t" style="left:432px;top:318px;font-size:8px;font-weight:bold;color:#333">123</div>
<div class="a" style="left:426px;top:331px;width:28px;height:27px;background:linear-gradient(#fdd7a0,#f8b870);border:1px solid #b09070"></div>
<div class="a" style="left:426px;top:358px;width:28px;height:27px;background:linear-gradient(#fdd7a0,#f8b870);border:1px solid #b09070"></div>
<div class="a" style="left:426px;top:386px;width:28px;height:27px;background:linear-gradient(#fdd7a0,#f8b870);border:1px solid #b09070"></div>
<div class="a" style="left:426px;top:442px;width:28px;height:27px;background:linear-gradient(#fdd7a0,#f8b870);border:1px solid #b09070"></div>
<svg class="a" style="left:428px;top:333px" width="24" height="23"><path d="M3 20L21 8" stroke="#3a3a9a" stroke-width="1.5"/><path d="M3 14V22M21 2V11" stroke="#3a3a9a" stroke-width="1.3"/><text x="1" y="13" font-size="6" font-family="Liberation Sans" fill="#222">0</text><text x="19" y="7" font-size="6" font-family="Liberation Sans" fill="#222">1</text><text x="13" y="22" font-size="6" font-family="Liberation Sans" fill="#222">+10</text></svg>
<svg class="a" style="left:428px;top:360px" width="24" height="23"><rect x="3" y="3" width="8" height="8" fill="#6a6ab0" stroke="#333" stroke-width=".6"/><path d="M7 3V11M3 7H11" stroke="#333" stroke-width=".6"/><text x="5" y="21" font-size="7" font-weight="bold" font-family="Liberation Sans" fill="#555">ABC</text></svg>
<svg class="a" style="left:428px;top:388px" width="24" height="23"><path d="M4 1V11" stroke="#e02020" stroke-width="1.6"/><circle cx="4" cy="13" r="1.5" fill="#111"/><text x="5" y="21" font-size="7" font-weight="bold" font-family="Liberation Sans" fill="#555">ABC</text></svg>
<svg class="a" style="left:428px;top:414px" width="24" height="24"><path d="M2 7L10 5V12L2 14Z M10 12L20 10V17L10 19Z" fill="#8a8ad0" stroke="#444" stroke-width=".6"/><path d="M5 1V6M14 17V23" stroke="#e02020" stroke-width="1.4"/><path d="M3 5L5 8L7 5ZM12 20L14 23L16 20Z" fill="#e02020"/><path d="M15 2Q19 2 19 6" stroke="#888" stroke-width="1" fill="none"/></svg>
<svg class="a" style="left:428px;top:444px" width="24" height="23"><path d="M4 5L20 2L19 19L3 21Z" fill="#3a78d8" stroke="#222" stroke-width=".8"/><circle cx="4" cy="5" r="1.8" fill="#fff" stroke="#222" stroke-width=".6"/><circle cx="20" cy="2.5" r="1.8" fill="#fff" stroke="#222" stroke-width=".6"/><circle cx="19" cy="19" r="1.8" fill="#fff" stroke="#222" stroke-width=".6"/><circle cx="3" cy="20.5" r="1.8" fill="#fff" stroke="#222" stroke-width=".6"/></svg>
<svg class="a" style="left:422px;top:827px" width="4" height="22"><use href="#dotsv"/></svg>
<svg class="a" style="left:433px;top:827px" width="19" height="16"><use href="#folder"/></svg>
<svg class="a" style="left:461px;top:827px" width="19" height="16"><use href="#folder"/></svg>
<svg class="a" style="left:489px;top:827px" width="19" height="16"><use href="#folder"/></svg>
<svg class="a" style="left:517px;top:827px" width="19" height="16"><use href="#folder"/></svg>
<svg class="a" style="left:545px;top:827px" width="19" height="16"><use href="#folder"/></svg>
<svg class="a" style="left:573px;top:827px" width="19" height="16"><use href="#folder"/></svg>
<svg class="a" style="left:436px;top:836px" width="19" height="14"><use href="#blocks"/></svg>
<svg class="a" style="left:462px;top:836px" width="19" height="14"><use href="#cubeblue"/></svg>
<svg class="a" style="left:494px;top:834px" width="16" height="16"><path d="M1 15V4M1 15H15" stroke="#111" stroke-width="1"/><path d="M2 6Q8 0 15 5" stroke="#e02020" stroke-width="1.5" fill="none"/><path d="M6 6H10L8 10L10 14H6L8 10Z" fill="#aaa" stroke="#666" stroke-width=".5"/></svg>
<svg class="a" style="left:516px;top:830px" width="10" height="20"><text x="2" y="8" font-size="8" font-weight="bold" font-family="Liberation Sans" fill="#000">t</text><path d="M3 11L3 13M3 17V19" stroke="#c00" stroke-width="1"/></svg>
<svg class="a" style="left:520px;top:836px" width="19" height="14"><use href="#cubegray"/></svg>
<svg class="a" style="left:548px;top:827px" width="22" height="24"><path d="M8 1V15" stroke="#e02020" stroke-width="2.2"/><path d="M4 12L8 18L12 12Z" fill="#e02020"/><circle cx="8" cy="20" r="2" fill="#111"/><rect x="12" y="15" width="8" height="7" fill="#7ac030" stroke="#3a8010" stroke-width=".6"/><path d="M13 17.5H19M13 19.5H19" stroke="#3a8010" stroke-width=".6"/></svg>
<svg class="a" style="left:576px;top:829px" width="22" height="22"><path d="M8 8V3M8 8L3 13M8 8L13 11" stroke="#6a6ac8" stroke-width="1.6"/><rect x="12" y="14" width="8" height="7" fill="#7ac030" stroke="#3a8010" stroke-width=".6"/><path d="M13 16.5H19M13 18.5H19" stroke="#3a8010" stroke-width=".6"/></svg>
<svg class="a" style="left:600px;top:837px" width="6" height="4"><use href="#dd"/></svg>
<div class="a" style="left:614px;top:828px;width:1px;height:20px;background:#888"></div>
<svg class="a" style="left:627px;top:829px" width="17" height="17"><use href="#redx"/></svg>
<svg class="a" style="left:652px;top:829px" width="22" height="18"><path d="M3 4Q3 1 7 1H10Q13 1 13 4V14Q13 17 10 17H6Q3 17 3 14Z" fill="#9a9a9a" stroke="#666" stroke-width=".6"/><path d="M8 4Q8 1 12 1H15Q18 1 18 4V14Q18 17 15 17H11Q8 17 8 14Z" fill="#b4b4b4" stroke="#666" stroke-width=".6"/></svg>
<svg class="a" style="left:680px;top:829px" width="16" height="14"><use href="#folder"/></svg>
<svg class="a" style="left:686px;top:834px" width="16" height="14"><use href="#folder"/></svg>
<svg class="a" style="left:684px;top:836px" width="14" height="12"><path d="M2 2Q4 9 10 8L9 5L13 9L9 12L10 10Q3 10 2 2Z" fill="#e02020"/></svg>
<svg class="a" style="left:710px;top:828px" width="20" height="22"><text x="9" y="8" font-size="8" font-weight="bold" font-family="Liberation Sans" fill="#555">2</text><text x="6" y="14" font-size="8" font-weight="bold" font-family="Liberation Sans" fill="#555">1</text><text x="6" y="21" font-size="8" font-weight="bold" font-family="Liberation Sans" fill="#555">3</text><path d="M1 9L4 6M18 9L15 6" stroke="#e02020" stroke-width="1.2"/></svg>
<svg class="a" style="left:742px;top:827px" width="4" height="22"><use href="#dotsv"/></svg>
<div class="a" style="left:749px;top:825px;width:110px;height:26px;background:#fff"></div>
<div class="a" style="left:842px;top:826px;width:16px;height:24px;background:#f0f0f0"></div>
<svg class="a" style="left:845px;top:836px" width="9" height="5"><use href="#dd"/></svg>
<svg class="a" style="left:749px;top:829px" width="18" height="13"><use href="#surf"/></svg>
<svg class="a" style="left:750px;top:845px" width="16" height="4"><use href="#rainbow"/></svg>
<div class="t" style="left:770px;top:831px;font-size:14px;color:#000">Auto</div>
<svg class="a" style="left:861px;top:828px" width="22" height="16"><use href="#surfw"/></svg>
<svg class="a" style="left:888px;top:837px" width="6" height="4"><use href="#dd"/></svg>
<svg class="a" style="left:900px;top:828px" width="22" height="16"><use href="#surf"/></svg>
<svg class="a" style="left:926px;top:837px" width="6" height="4"><use href="#dd"/></svg>
<svg class="a" style="left:937px;top:828px" width="21" height="22"><use href="#cube3"/></svg>
<div class="a" style="left:968px;top:828px;width:1px;height:20px;background:#888"></div>
<div class="a" style="left:977px;top:825px;width:116px;height:26px;background:#fff"></div>
<div class="a" style="left:1076px;top:826px;width:16px;height:24px;background:#f0f0f0"></div>
<svg class="a" style="left:1079px;top:836px" width="9" height="5"><use href="#dd"/></svg>
<svg class="a" style="left:978px;top:828px" width="17" height="15"><use href="#rubik"/></svg>
<svg class="a" style="left:978px;top:845px" width="16" height="4"><use href="#rainbow"/></svg>
<div class="t" style="left:998px;top:831px;font-size:14px;color:#000">By Comp</div>
<svg class="a" style="left:1097px;top:829px" width="20" height="19"><use href="#rubikw"/></svg>
<svg class="a" style="left:1124px;top:837px" width="6" height="4"><use href="#dd"/></svg>
<svg class="a" style="left:1135px;top:829px" width="20" height="19"><use href="#rubik"/></svg>
<svg class="a" style="left:1162px;top:837px" width="6" height="4"><use href="#dd"/></svg>
<svg class="a" style="left:1175px;top:831px" width="20" height="14"><path d="M2 12L17 3" stroke="#333" stroke-width="1.8"/></svg>
<svg class="a" style="left:1200px;top:837px" width="6" height="4"><use href="#dd"/></svg>
<svg class="a" style="left:1211px;top:831px" width="21" height="13"><use href="#gridflat"/></svg>
<svg class="a" style="left:1238px;top:837px" width="6" height="4"><use href="#dd"/></svg>
<svg class="a" style="left:1249px;top:831px" width="21" height="13"><use href="#plate"/></svg>
<svg class="a" style="left:1276px;top:837px" width="6" height="4"><use href="#dd"/></svg>
<svg class="a" style="left:1289px;top:830px" width="17" height="17"><path d="M2 7L6 5V9L2 11ZM9 3L13 1V5L9 7ZM2 14L6 12V16L2 18ZM9 10L13 8V12L9 14Z" fill="#5a5aa8"/></svg>
<svg class="a" style="left:1316px;top:828px" width="20" height="20"><use href="#monitor"/></svg>
<svg class="a" style="left:1347px;top:827px" width="4" height="22"><use href="#dotsv"/></svg>
<svg class="a" style="left:1359px;top:828px" width="20" height="20"><use href="#star"/></svg>
<svg class="a" style="left:480px;top:685px" width="100" height="130">
<text x="21" y="18" font-size="15.5" font-family="Liberation Sans" fill="#fff">X</text>
<text x="77" y="61" font-size="15.5" font-family="Liberation Sans" fill="#fff">Z</text>
<text x="51" y="123" font-size="15.5" font-family="Liberation Sans" fill="#fff">Y</text>
<path d="M11.6 79.3L17 48" stroke="#ff2a2a" stroke-width="1"/><path d="M19.7 28.4L13.3 47.5Q17 50 20.3 46.9Z" fill="none" stroke="#ff2a2a" stroke-width="1.1"/>
<path d="M11.6 79.3L45.5 70" stroke="#2a2aff" stroke-width="1"/><path d="M66.5 64.8L45.1 67.7Q44 71 46.3 72.9Z" fill="none" stroke="#2a2aff" stroke-width="1.1"/>
<path d="M11.6 79.3L31.5 102.5" stroke="#22ee22" stroke-width="1"/><path d="M44.6 116.3L28.9 104.2Q33 100 34.7 100.7Z" fill="none" stroke="#22ee22" stroke-width="1.1"/>
</svg>
<div class="t" style="left:1724px;top:802px;font-size:11px;color:#333">30</div>
<svg class="a" style="left:1740px;top:806px" width="162" height="10"><path d="M1.5 1V8H159.5V1" stroke="#444" stroke-width="1.5" fill="none"/></svg>
</body></html>
